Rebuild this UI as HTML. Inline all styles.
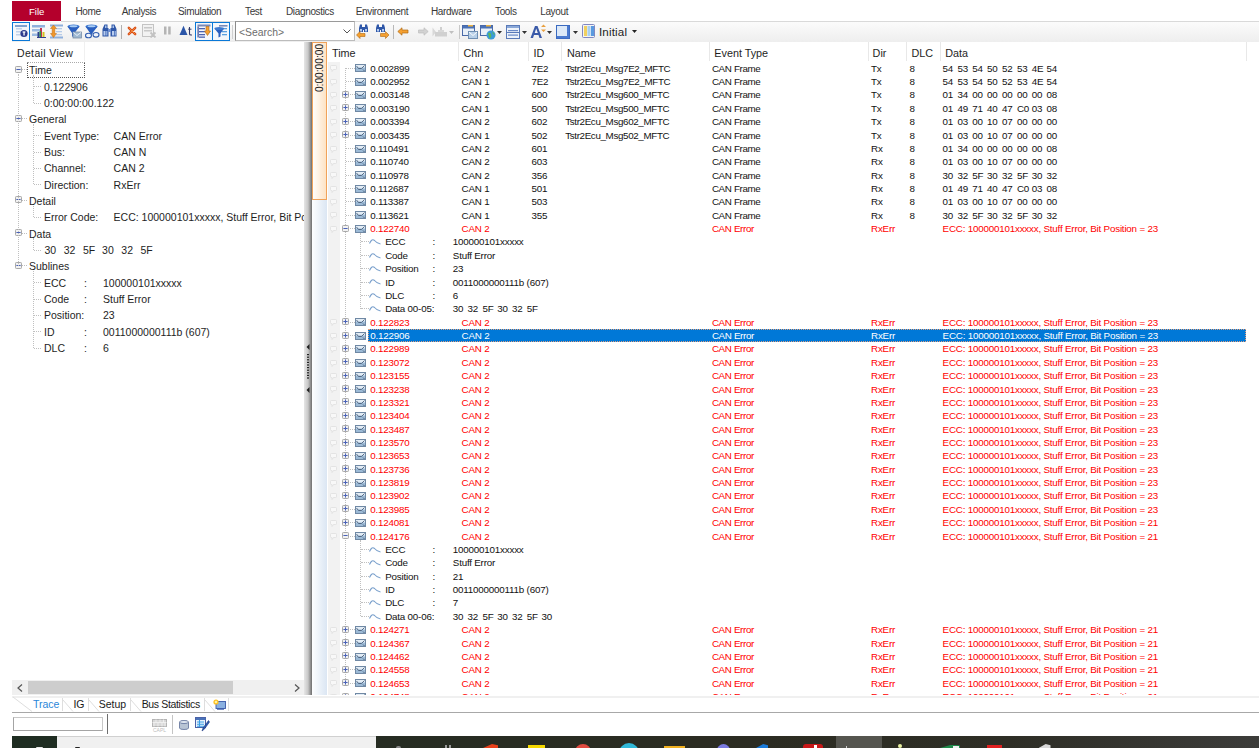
<!DOCTYPE html><html><head><meta charset="utf-8"><style>
html,body{margin:0;padding:0}
body{width:1259px;height:756px;position:relative;overflow:hidden;background:#fff;font-family:"Liberation Sans", sans-serif;color:#1a1a1a}
div,span,svg{position:absolute;box-sizing:border-box}
.t{white-space:pre;line-height:1}
.ic{display:block}
.m{font-size:10px;color:#383838;top:7px;letter-spacing:-0.35px}
.lt{font-size:10.5px;color:#1e1e1e}
.g{font-size:9.8px;color:#111;letter-spacing:-0.2px}
.r{color:#ff0000}
.dotv{border-left:1px dotted #c0c0c0;width:1px}
.doth{border-top:1px dotted #c0c0c0;height:1px}
</style></head><body>

<div style="left:12px;top:1px;width:49px;height:20px;background:#b4002c"></div>
<span class="t" style="left:29px;top:7px;font-size:9.6px;color:#fff">File</span>
<span class="t m" style="left:75.5px">Home</span>
<span class="t m" style="left:121.8px">Analysis</span>
<span class="t m" style="left:178px">Simulation</span>
<span class="t m" style="left:245px">Test</span>
<span class="t m" style="left:286px">Diagnostics</span>
<span class="t m" style="left:355.8px">Environment</span>
<span class="t m" style="left:431px">Hardware</span>
<span class="t m" style="left:495px">Tools</span>
<span class="t m" style="left:540.2px">Layout</span>
<div style="left:61px;top:21px;width:1198px;height:1px;background:#d9d9d9"></div>
<div style="left:12px;top:22px;width:1247px;height:20px;background:linear-gradient(#fbfbfb,#eeeeee)"></div>
<div style="left:12px;top:22px;width:18px;height:19px;border:1px solid #0a78d7;background:#f4f7fb"></div>
<div style="left:195px;top:22px;width:18px;height:19px;border:1px solid #0a78d7;background:#f4f7fb"></div>
<div style="left:212px;top:22px;width:18px;height:19px;border:1px solid #0a78d7;background:#f4f7fb"></div>
<div style="left:235px;top:21px;width:120px;height:20px;background:#fff;border:1px solid #bcbcbc;border-left-color:#8a8a8a;border-top-color:#9a9a9a"></div>
<span class="t" style="left:239px;top:27.5px;font-size:10.4px;color:#6d6d6d">&lt;Search&gt;</span>
<svg style="left:343px;top:29px" width="8" height="5" viewBox="0 0 8 5"><path d="M0.5 0.5 L4 4 L7.5 0.5" stroke="#555" fill="none"/></svg>
<span class="t" style="left:599px;top:26px;font-size:11.6px;color:#222;letter-spacing:0.15px">Initial</span>
<svg style="left:14px;top:24px" width="15" height="15" viewBox="0 0 15 15"><rect x="1" y="1" width="12" height="2" fill="#7fa2d0"/><rect x="2" y="4" width="6" height="1.5" fill="#c0d2ea"/><rect x="2" y="7" width="6" height="1.5" fill="#c0d2ea"/><rect x="2" y="10" width="6" height="1.5" fill="#c0d2ea"/><circle cx="10" cy="9.5" r="3.6" fill="#2c3a8c"/><rect x="9.4" y="8" width="1.3" height="3.5" fill="#fff"/><rect x="8.6" y="7.4" width="2.8" height="1.2" fill="#fff"/></svg>
<svg style="left:32px;top:24px" width="15" height="15" viewBox="0 0 15 15"><rect x="0" y="1" width="13" height="2.5" fill="#8fb0dc"/><rect x="0" y="5" width="9" height="2.5" fill="#9dbbe2"/><rect x="0" y="9.5" width="9" height="2.5" fill="#9dbbe2"/><rect x="5.5" y="8" width="2" height="6" fill="#2e3f8c"/><rect x="8" y="4" width="2" height="10" fill="#c0304a"/><rect x="7.5" y="7" width="1.5" height="7" fill="#2a9a4a"/><rect x="10.5" y="8" width="2" height="6" fill="#d6c21e"/><rect x="5" y="13" width="9" height="1" fill="#2e3f8c"/></svg>
<svg style="left:50px;top:24px" width="14" height="15" viewBox="0 0 14 15"><rect x="0" y="0.5" width="13" height="2" fill="#8fb0dc"/><rect x="6" y="4" width="6" height="1.3" fill="#b5cbe8"/><rect x="6" y="7" width="6" height="1.3" fill="#b5cbe8"/><rect x="6" y="10" width="6" height="1.3" fill="#b5cbe8"/><rect x="0" y="12.5" width="13" height="2" fill="#8fb0dc"/><path d="M3.5 1 L6.5 4.5 H4.8 V9.5 H6.5 L3.5 13.5 L0.5 9.5 H2.2 V4.5 H0.5 Z" fill="#f0962a" stroke="#b86a14" stroke-width="0.5"/></svg>
<svg style="left:67px;top:24px" width="15" height="15" viewBox="0 0 15 15"><ellipse cx="6.5" cy="2.5" rx="6" ry="2" fill="#3d78d0"/><path d="M0.5 2.5 L5 9 V13 L7.5 11 V9 L12.5 2.5 Z" fill="#2a5fbf"/><ellipse cx="6.5" cy="2.3" rx="4" ry="1" fill="#a8cdf5"/><rect x="6" y="8" width="8.5" height="6" fill="#9fb9d2" stroke="#7a8ea6" stroke-width="0.8"/><path d="M6.5 8.5 L10 11.5 L14 8.5" stroke="#eef4fa" fill="none" stroke-width="0.9"/></svg>
<svg style="left:85px;top:24px" width="15" height="15" viewBox="0 0 15 15"><ellipse cx="6.5" cy="2.5" rx="6" ry="2" fill="#3d78d0"/><path d="M0.5 2.5 L5 9 V12 L7.5 10 V9 L12.5 2.5 Z" fill="#2a5fbf"/><ellipse cx="6.5" cy="2.3" rx="4" ry="1" fill="#a8cdf5"/><ellipse cx="3.5" cy="11.5" rx="3" ry="2.3" fill="#eef3fb" stroke="#3560b0" stroke-width="1.1"/><ellipse cx="11" cy="10.8" rx="3" ry="2.3" fill="#eef3fb" stroke="#3560b0" stroke-width="1.1"/></svg>
<svg style="left:102px;top:24px" width="15" height="14" viewBox="0 0 15 14"><path d="M2.5 0.5 H5.5 V4 H6.5 V12.5 H0.5 V5 Z" fill="#2f57a8"/><path d="M9.5 0.5 H12.5 L14.5 5 V12.5 H8.5 V4 H9.5 Z" fill="#2f57a8"/><rect x="6" y="5" width="3" height="3" fill="#6f8fcf"/><rect x="1.5" y="7" width="2" height="4.5" fill="#b9cdef"/><rect x="4" y="7" width="1.5" height="4.5" fill="#8aa8dc"/><rect x="10" y="7" width="2" height="4.5" fill="#b9cdef"/><rect x="12.5" y="7" width="1.5" height="4.5" fill="#8aa8dc"/><rect x="3" y="1.5" width="1.5" height="2.5" fill="#a9c3ea"/><rect x="10.5" y="1.5" width="1.5" height="2.5" fill="#a9c3ea"/></svg>
<div style="left:121px;top:25px;width:1px;height:14px;background:#b0b0b0"></div>
<svg style="left:127px;top:26px" width="10" height="10" viewBox="0 0 10 10"><path d="M1.8 1.8 L8.2 8.2 M8.2 1.8 L1.8 8.2" stroke="#d8501a" stroke-width="2.4" stroke-linecap="round"/><path d="M2 2 L8 8 M8 2 L2 8" stroke="#f58a3a" stroke-width="0.9" stroke-linecap="round"/></svg>
<svg style="left:142px;top:24px" width="15" height="14" viewBox="0 0 15 14"><rect x="0.5" y="0.5" width="11" height="12" fill="#f2f2f2" stroke="#c4c4c4"/><rect x="2" y="3" width="8" height="1.5" fill="#c8c8c8"/><rect x="2" y="6" width="8" height="1.5" fill="#c8c8c8"/><path d="M8.5 8.5 L13.5 13.5 M13.5 8.5 L8.5 13.5" stroke="#c2c2c2" stroke-width="1.8"/></svg>
<svg style="left:164px;top:26px" width="7" height="9" viewBox="0 0 7 9"><rect x="0" y="0.5" width="2.5" height="8" fill="#b4b4b4"/><rect x="4.2" y="0.5" width="2.5" height="8" fill="#b4b4b4"/></svg>
<svg style="left:179px;top:25px" width="14" height="11" viewBox="0 0 14 11"><path d="M0.5 10 L4.5 0.8 L8.5 10 Z" fill="#2a55a8"/><path d="M10.5 2 V9 Q10.5 10 12 10 H13" stroke="#333a6a" stroke-width="1.1" fill="none"/><path d="M9.2 4.2 H12.5" stroke="#333a6a" stroke-width="1"/></svg>
<svg style="left:197px;top:24px" width="14" height="15" viewBox="0 0 14 15"><rect x="0.5" y="0.5" width="13" height="2" fill="#7a8ab8"/><rect x="0.5" y="2.5" width="1.2" height="11" fill="#3a4a90"/><rect x="2" y="4" width="6" height="1.3" fill="#4a62b0"/><rect x="2" y="7" width="6" height="1.3" fill="#4a62b0"/><rect x="2" y="10" width="6" height="1.3" fill="#4a62b0"/><rect x="2" y="12.5" width="6" height="1.3" fill="#4a62b0"/><path d="M9 2.5 H12 V7 H13.5 L10.5 11.5 L7.5 7 H9 Z" fill="#f5a030" stroke="#a86a20" stroke-width="0.6"/></svg>
<svg style="left:214px;top:24px" width="14" height="15" viewBox="0 0 14 15"><rect x="5" y="1" width="8.5" height="1.6" fill="#7a8ab8"/><rect x="8" y="4" width="5" height="1.3" fill="#5aa0e0"/><rect x="8" y="7" width="5" height="1.3" fill="#5aa0e0"/><rect x="8" y="10" width="5" height="1.3" fill="#5aa0e0"/><path d="M0.5 4.5 L4.5 9.5 V13.5 L6.5 12.5 V9.5 L10 4.5 Z" fill="#2a5fbf"/><ellipse cx="5.2" cy="4.5" rx="4.7" ry="1.5" fill="#3d78d0"/></svg>
<div style="left:232px;top:25px;width:1px;height:14px;background:#d0d0d0"></div>
<svg style="left:356px;top:24px" width="15" height="16" viewBox="0 0 15 16"><path d="M4 0.5 H6 V3 H7 V8 H3 V4 Z" fill="#2f57a8"/><path d="M9 0.5 H11 L12 4 V8 H8 V3 H9 Z" fill="#2f57a8"/><rect x="6.5" y="3" width="2" height="3" fill="#2f57a8"/><rect x="4" y="5" width="2" height="2.5" fill="#b0c8ee"/><rect x="9" y="5" width="2" height="2.5" fill="#b0c8ee"/><path d="M0.5 11 L4 7.5 V9.5 H9 V12.5 H4 V14.5 Z" fill="#f5a030" stroke="#b06a14" stroke-width="0.6"/></svg>
<svg style="left:374px;top:24px" width="16" height="16" viewBox="0 0 16 16"><g transform="translate(-1,0)"><path d="M4 0.5 H6 V3 H7 V8 H3 V4 Z" fill="#2f57a8"/><path d="M9 0.5 H11 L12 4 V8 H8 V3 H9 Z" fill="#2f57a8"/><rect x="6.5" y="3" width="2" height="3" fill="#2f57a8"/><rect x="4" y="5" width="2" height="2.5" fill="#b0c8ee"/><rect x="9" y="5" width="2" height="2.5" fill="#b0c8ee"/></g><path d="M15 11 L11.5 7.5 V9.5 H6.5 V12.5 H11.5 V14.5 Z" fill="#f5a030" stroke="#b06a14" stroke-width="0.6"/></svg>
<div style="left:393px;top:25px;width:1px;height:14px;background:#b8b8b8"></div>
<svg style="left:397px;top:27px" width="12" height="9" viewBox="0 0 12 9"><path d="M0.8 4.5 L5 0.8 V3 H11 V6 H5 V8.2 Z" fill="#f5a030" stroke="#b06a14" stroke-width="0.7"/></svg>
<svg style="left:418px;top:27px" width="11" height="9" viewBox="0 0 11 9"><path d="M10.2 4.5 L6 0.8 V3 H0.5 V6 H6 V8.2 Z" fill="#d2d2d2" stroke="#bdbdbd" stroke-width="0.7"/></svg>
<svg style="left:432px;top:26px" width="16" height="12" viewBox="0 0 16 12"><path d="M0.5 1.5 L4 6 L0.5 10.5 Z" fill="#d8d8d8"/><rect x="3" y="6" width="12" height="4.5" fill="#d0d0d0"/><rect x="8" y="1" width="2" height="5" fill="#cfcfcf"/><rect x="6" y="4" width="6" height="2" fill="#d8d8d8"/></svg>
<svg style="left:449px;top:31px" width="5" height="3" viewBox="0 0 5 3"><path d="M0 0 H5 L2.5 3 Z" fill="#c0c0c0"/></svg>
<div style="left:459px;top:25px;width:1px;height:14px;background:#c8c8c8"></div>
<svg style="left:462px;top:25px" width="16" height="14" viewBox="0 0 16 14"><rect x="0.5" y="0.5" width="12" height="10" fill="#e9f0f8" stroke="#4a6aa8"/><rect x="1" y="1" width="11" height="2.5" fill="#4a72b8"/><rect x="6" y="0" width="5" height="1.5" fill="#e8b040"/><rect x="6.5" y="6.5" width="9" height="7" fill="#b8d0e8" stroke="#6f8fb3"/><path d="M7 7 L11 10.5 L15 7" stroke="#fff" fill="none" stroke-width="0.9"/></svg>
<svg style="left:480px;top:25px" width="16" height="15" viewBox="0 0 16 15"><rect x="0.5" y="0.5" width="12" height="10" fill="#e9f0f8" stroke="#4a6aa8"/><rect x="1" y="1" width="11" height="2.5" fill="#4a72b8"/><rect x="6" y="0" width="5" height="1.5" fill="#e8b040"/><circle cx="11" cy="10" r="4.5" fill="#3a9ad8"/><path d="M8 8 Q10 7 11 9 Q12 12 9.5 13.5 Z" fill="#5cb85c"/><path d="M12 6 Q14 8 15 10 L13 9 Z" fill="#5cb85c"/></svg>
<svg style="left:497px;top:31px" width="5" height="3" viewBox="0 0 5 3"><path d="M0 0 H5 L2.5 3 Z" fill="#333"/></svg>
<svg style="left:506px;top:25px" width="14" height="14" viewBox="0 0 14 14"><rect x="0.5" y="0.5" width="13" height="13" fill="#eef3fa" stroke="#5a7ab8"/><rect x="1" y="1" width="12" height="2" fill="#8aa8d8"/><rect x="2" y="5" width="10" height="1.2" fill="#6a8ac8"/><rect x="1" y="7" width="12" height="1" fill="#5a7ab8"/><rect x="2" y="9.5" width="10" height="1.2" fill="#6a8ac8"/></svg>
<svg style="left:522px;top:31px" width="5" height="3" viewBox="0 0 5 3"><path d="M0 0 H5 L2.5 3 Z" fill="#333"/></svg>
<svg style="left:530px;top:24px" width="17" height="15" viewBox="0 0 17 15"><path d="M0.5 14 L5 2 H7.5 L12 14 H9.5 L8.5 11 H4 L3 14 Z M4.7 9 H7.8 L6.2 4.5 Z" fill="#3a5aa8" fill-rule="evenodd"/><path d="M13.5 0.5 L16 3 H11 Z M13.5 8 L16 5.5 H11 Z" fill="#e8a040"/></svg>
<svg style="left:547px;top:31px" width="5" height="3" viewBox="0 0 5 3"><path d="M0 0 H5 L2.5 3 Z" fill="#333"/></svg>
<svg style="left:556px;top:25px" width="14" height="14" viewBox="0 0 14 14"><rect x="0.5" y="0.5" width="13" height="13" fill="#dce9f8" stroke="#3a6ac0" stroke-width="1"/><rect x="1" y="11" width="12" height="2.2" fill="#4a7ad0"/><rect x="11" y="1" width="2.2" height="12" fill="#4a7ad0"/></svg>
<svg style="left:573px;top:31px" width="5" height="3" viewBox="0 0 5 3"><path d="M0 0 H5 L2.5 3 Z" fill="#333"/></svg>
<svg style="left:582px;top:24px" width="13" height="14" viewBox="0 0 13 14"><rect x="0.5" y="0.5" width="12" height="13" rx="1" fill="#f4f4f4" stroke="#8088c0"/><rect x="2" y="2" width="3" height="10" fill="#f0d060"/><rect x="5.5" y="2" width="3" height="10" fill="#a8d0f0"/><rect x="9" y="2" width="3" height="10" fill="#5a9ae0"/></svg>
<svg style="left:632px;top:30px" width="5" height="3" viewBox="0 0 5 3"><path d="M0 0 H5 L2.5 3 Z" fill="#222"/></svg>
<div style="left:12px;top:42px;width:73px;height:19px;border-right:1px solid #f0f0f0"></div>
<span class="t lt" style="left:17px;top:47.5px;letter-spacing:0.35px">Detail View</span>
<div style="left:12px;top:61px;width:292px;height:619px;overflow:hidden">
<svg class="ic" style="left:3px;top:5px" width="7" height="7" viewBox="0 0 7 7"><rect x="0.5" y="0.5" width="6" height="6" rx="0.8" fill="#f2f2f2" stroke="#a8a8a8"/><path d="M1.4 3.5 H5.6" stroke="#4a62b8" stroke-width="1"/></svg>
<div class="doth" style="left:10px;top:8px;width:5px"></div>
<span class="t lt" style="left:17px;top:4.2px">Time</span>
<div class="doth" style="left:22px;top:25px;width:7px"></div>
<span class="t lt" style="left:32px;top:20.5px">0.122906</span>
<div class="doth" style="left:22px;top:42px;width:7px"></div>
<span class="t lt" style="left:32px;top:36.9px">0:00:00:00.122</span>
<svg class="ic" style="left:3px;top:54px" width="7" height="7" viewBox="0 0 7 7"><rect x="0.5" y="0.5" width="6" height="6" rx="0.8" fill="#f2f2f2" stroke="#a8a8a8"/><path d="M1.4 3.5 H5.6" stroke="#4a62b8" stroke-width="1"/></svg>
<div class="doth" style="left:10px;top:57px;width:5px"></div>
<span class="t lt" style="left:17px;top:53.2px">General</span>
<div class="doth" style="left:22px;top:74px;width:7px"></div>
<span class="t lt" style="left:32px;top:69.5px">Event Type:</span>
<span class="t lt" style="left:101.6px;top:69.5px">CAN Error</span>
<div class="doth" style="left:22px;top:91px;width:7px"></div>
<span class="t lt" style="left:32px;top:85.8px">Bus:</span>
<span class="t lt" style="left:101.6px;top:85.8px">CAN N</span>
<div class="doth" style="left:22px;top:107px;width:7px"></div>
<span class="t lt" style="left:32px;top:102.2px">Channel:</span>
<span class="t lt" style="left:101.6px;top:102.2px">CAN 2</span>
<div class="doth" style="left:22px;top:123px;width:7px"></div>
<span class="t lt" style="left:32px;top:118.5px">Direction:</span>
<span class="t lt" style="left:101.6px;top:118.5px">RxErr</span>
<svg class="ic" style="left:3px;top:135px" width="7" height="7" viewBox="0 0 7 7"><rect x="0.5" y="0.5" width="6" height="6" rx="0.8" fill="#f2f2f2" stroke="#a8a8a8"/><path d="M1.4 3.5 H5.6" stroke="#4a62b8" stroke-width="1"/></svg>
<div class="doth" style="left:10px;top:139px;width:5px"></div>
<span class="t lt" style="left:17px;top:134.8px">Detail</span>
<div class="doth" style="left:22px;top:156px;width:7px"></div>
<span class="t lt" style="left:32px;top:151.2px">Error Code:</span>
<span class="t lt" style="left:101.6px;top:151.2px">ECC: 100000101xxxxx, Stuff Error, Bit Position = 23</span>
<svg class="ic" style="left:3px;top:168px" width="7" height="7" viewBox="0 0 7 7"><rect x="0.5" y="0.5" width="6" height="6" rx="0.8" fill="#f2f2f2" stroke="#a8a8a8"/><path d="M1.4 3.5 H5.6" stroke="#4a62b8" stroke-width="1"/></svg>
<div class="doth" style="left:10px;top:172px;width:5px"></div>
<span class="t lt" style="left:17px;top:167.5px">Data</span>
<div class="doth" style="left:22px;top:189px;width:7px"></div>
<span class="t lt" style="left:32.5px;top:183.8px">30</span>
<span class="t lt" style="left:51.7px;top:183.8px">32</span>
<span class="t lt" style="left:70.9px;top:183.8px">5F</span>
<span class="t lt" style="left:90.1px;top:183.8px">30</span>
<span class="t lt" style="left:109.3px;top:183.8px">32</span>
<span class="t lt" style="left:128.5px;top:183.8px">5F</span>
<svg class="ic" style="left:3px;top:201px" width="7" height="7" viewBox="0 0 7 7"><rect x="0.5" y="0.5" width="6" height="6" rx="0.8" fill="#f2f2f2" stroke="#a8a8a8"/><path d="M1.4 3.5 H5.6" stroke="#4a62b8" stroke-width="1"/></svg>
<div class="doth" style="left:10px;top:204px;width:5px"></div>
<span class="t lt" style="left:17px;top:200.2px">Sublines</span>
<div class="doth" style="left:22px;top:221px;width:7px"></div>
<span class="t lt" style="left:32px;top:216.5px">ECC</span>
<span class="t lt" style="left:72px;top:216.5px">:</span>
<span class="t lt" style="left:91px;top:216.5px">100000101xxxxx</span>
<div class="doth" style="left:22px;top:238px;width:7px"></div>
<span class="t lt" style="left:32px;top:232.8px">Code</span>
<span class="t lt" style="left:72px;top:232.8px">:</span>
<span class="t lt" style="left:91px;top:232.8px">Stuff Error</span>
<div class="doth" style="left:22px;top:254px;width:7px"></div>
<span class="t lt" style="left:32px;top:249.1px">Position:</span>
<span class="t lt" style="left:91px;top:249.1px">23</span>
<div class="doth" style="left:22px;top:270px;width:7px"></div>
<span class="t lt" style="left:32px;top:265.5px">ID</span>
<span class="t lt" style="left:72px;top:265.5px">:</span>
<span class="t lt" style="left:91px;top:265.5px">0011000000111b (607)</span>
<div class="doth" style="left:22px;top:287px;width:7px"></div>
<span class="t lt" style="left:32px;top:281.8px">DLC</span>
<span class="t lt" style="left:72px;top:281.8px">:</span>
<span class="t lt" style="left:91px;top:281.8px">6</span>
<div class="dotv" style="left:6px;top:13px;height:192.0px"></div>
<div class="dotv" style="left:21px;top:14.0px;height:27.7px"></div>
<div class="dotv" style="left:21px;top:63.0px;height:60.3px"></div>
<div class="dotv" style="left:21px;top:144.6px;height:11.3px"></div>
<div class="dotv" style="left:21px;top:177.3px;height:11.3px"></div>
<div class="dotv" style="left:21px;top:210.0px;height:76.6px"></div>
</div>
<div style="left:27px;top:62px;width:58px;height:16px;border:1px dotted #555;border-top-color:#aaa"></div>
<div style="left:12px;top:680px;width:292px;height:15px;background:#f0f0f0"></div>
<div style="left:28px;top:681px;width:205px;height:13px;background:#cdcdcd"></div>
<svg style="left:17px;top:684px" width="6" height="8" viewBox="0 0 6 8"><path d="M5 0.5 L1 4 L5 7.5" stroke="#555" stroke-width="1.2" fill="none"/></svg>
<svg style="left:294px;top:684px" width="6" height="8" viewBox="0 0 6 8"><path d="M1 0.5 L5 4 L1 7.5" stroke="#555" stroke-width="1.2" fill="none"/></svg>
<div style="left:304px;top:42px;width:8px;height:653px;background:linear-gradient(to right,#e6e6e6,#c8c8c8 50%,#6e6e6e)"></div>
<svg style="left:305px;top:343px" width="6" height="50" viewBox="0 0 6 50"><path d="M4.5 1 L1.5 4 L4.5 7 Z" fill="#222"/><rect x="2" y="11.0" width="2" height="1.2" fill="#222"/><rect x="2" y="13.6" width="2" height="1.2" fill="#222"/><rect x="2" y="16.2" width="2" height="1.2" fill="#222"/><rect x="2" y="18.8" width="2" height="1.2" fill="#222"/><rect x="2" y="21.4" width="2" height="1.2" fill="#222"/><rect x="2" y="24.0" width="2" height="1.2" fill="#222"/><rect x="2" y="26.6" width="2" height="1.2" fill="#222"/><rect x="2" y="29.2" width="2" height="1.2" fill="#222"/><rect x="2" y="31.8" width="2" height="1.2" fill="#222"/><rect x="2" y="34.4" width="2" height="1.2" fill="#222"/><path d="M4.5 44 L1.5 47 L4.5 50 Z" fill="#222"/></svg>
<div style="left:312px;top:42px;width:15px;height:653px;background:linear-gradient(to right,#fdfeff,#dbe6f3)"></div>
<div style="left:312px;top:42px;width:15px;height:158px;border:1px solid #f0a35a;background:linear-gradient(to right,#fffdfa,#fde3c5)"></div>
<span class="t" style="left:319.5px;top:68px;font-size:10.2px;color:#222;transform:translate(-50%,-50%) rotate(-90deg);">0:00:00:00</span>
<div style="left:328px;top:62px;width:11.5px;height:633px;background:#f2f2f2"></div>
<span class="t" style="left:332px;top:47.8px;font-size:10.8px;color:#1e1e1e">Time</span>
<span class="t" style="left:463.5px;top:47.8px;font-size:10.8px;color:#1e1e1e">Chn</span>
<span class="t" style="left:533.4px;top:47.8px;font-size:10.8px;color:#1e1e1e">ID</span>
<span class="t" style="left:567px;top:47.8px;font-size:10.8px;color:#1e1e1e">Name</span>
<span class="t" style="left:714.3px;top:47.8px;font-size:10.8px;color:#1e1e1e">Event Type</span>
<span class="t" style="left:872.6px;top:47.8px;font-size:10.8px;color:#1e1e1e">Dir</span>
<span class="t" style="left:911.4px;top:47.8px;font-size:10.8px;color:#1e1e1e">DLC</span>
<span class="t" style="left:945.2px;top:47.8px;font-size:10.8px;color:#1e1e1e">Data</span>
<div style="left:458px;top:42px;width:1px;height:19px;background:#e8e8e8"></div>
<div style="left:528px;top:42px;width:1px;height:19px;background:#e8e8e8"></div>
<div style="left:561px;top:42px;width:1px;height:19px;background:#e8e8e8"></div>
<div style="left:709px;top:42px;width:1px;height:19px;background:#e8e8e8"></div>
<div style="left:868px;top:42px;width:1px;height:19px;background:#e8e8e8"></div>
<div style="left:906px;top:42px;width:1px;height:19px;background:#e8e8e8"></div>
<div style="left:940px;top:42px;width:1px;height:19px;background:#e8e8e8"></div>
<div style="left:1246px;top:42px;width:1px;height:19px;background:#e8e8e8"></div>
<div style="left:312px;top:61px;width:947px;height:634px;overflow:hidden">
<div class="dotv" style="left:33px;top:7.4px;height:615.0px"></div>
<div class="dotv" style="left:48px;top:171.8px;height:76.2px"></div>
<div class="dotv" style="left:48px;top:479.3px;height:76.2px"></div>
<svg class="ic" style="left:18px;top:4px" width="7" height="7" viewBox="0 0 7 7"><path d="M0.5 1.5 Q0.5 0.5 1.5 0.5 H5.5 Q6.5 0.5 6.5 1.5 V3.5 Q6.5 4.5 5.5 4.5 H3.5 L2 6.5 V4.5 H1.5 Q0.5 4.5 0.5 3.5 Z" fill="#f8f8f8" stroke="#dedede" stroke-width="0.8"/></svg>
<div class="doth" style="left:34px;top:7px;width:9px"></div>
<svg class="ic" style="left:43px;top:3px" width="11" height="8" viewBox="0 0 11 8"><rect x="0.5" y="0.5" width="10" height="7" fill="#9cbad6" stroke="#6f88a4"/><rect x="1" y="1" width="9" height="2.5" fill="#e2ecf5"/><path d="M1.5 2 L3.5 4.5 L6.5 4.5 L9.5 1.5 M8 5.5 L9.5 7" stroke="#4a5e78" stroke-width="0.9" fill="none"/></svg>
<span class="t g" style="left:58.30000000000001px;top:2.6px">0.002899</span>
<span class="t g" style="left:149.60000000000002px;top:2.6px">CAN 2</span>
<span class="t g" style="left:219.5px;top:2.6px">7E2</span>
<span class="t g" style="left:253.20000000000005px;top:2.6px;letter-spacing:-0.35px">Tstr2Ecu_Msg7E2_MFTC</span>
<span class="t g" style="left:399.9px;top:2.6px;letter-spacing:-0.35px">CAN Frame</span>
<span class="t g" style="left:559px;top:2.6px">Tx</span>
<span class="t g" style="left:597.5px;top:2.6px">8</span>
<span class="t g" style="left:630.6px;top:2.6px">54</span><span class="t g" style="left:645.5px;top:2.6px">53</span><span class="t g" style="left:660.3px;top:2.6px">54</span><span class="t g" style="left:675.1px;top:2.6px">50</span><span class="t g" style="left:690.0px;top:2.6px">52</span><span class="t g" style="left:704.9px;top:2.6px">53</span><span class="t g" style="left:719.7px;top:2.6px">4E</span><span class="t g" style="left:734.5px;top:2.6px">54</span>
<svg class="ic" style="left:18px;top:18px" width="7" height="7" viewBox="0 0 7 7"><path d="M0.5 1.5 Q0.5 0.5 1.5 0.5 H5.5 Q6.5 0.5 6.5 1.5 V3.5 Q6.5 4.5 5.5 4.5 H3.5 L2 6.5 V4.5 H1.5 Q0.5 4.5 0.5 3.5 Z" fill="#f8f8f8" stroke="#dedede" stroke-width="0.8"/></svg>
<div class="doth" style="left:34px;top:20px;width:9px"></div>
<svg class="ic" style="left:43px;top:17px" width="11" height="8" viewBox="0 0 11 8"><rect x="0.5" y="0.5" width="10" height="7" fill="#9cbad6" stroke="#6f88a4"/><rect x="1" y="1" width="9" height="2.5" fill="#e2ecf5"/><path d="M1.5 2 L3.5 4.5 L6.5 4.5 L9.5 1.5 M8 5.5 L9.5 7" stroke="#4a5e78" stroke-width="0.9" fill="none"/></svg>
<span class="t g" style="left:58.30000000000001px;top:16.0px">0.002952</span>
<span class="t g" style="left:149.60000000000002px;top:16.0px">CAN 1</span>
<span class="t g" style="left:219.5px;top:16.0px">7E2</span>
<span class="t g" style="left:253.20000000000005px;top:16.0px;letter-spacing:-0.35px">Tstr2Ecu_Msg7E2_MFTC</span>
<span class="t g" style="left:399.9px;top:16.0px;letter-spacing:-0.35px">CAN Frame</span>
<span class="t g" style="left:559px;top:16.0px">Tx</span>
<span class="t g" style="left:597.5px;top:16.0px">8</span>
<span class="t g" style="left:630.6px;top:16.0px">54</span><span class="t g" style="left:645.5px;top:16.0px">53</span><span class="t g" style="left:660.3px;top:16.0px">54</span><span class="t g" style="left:675.1px;top:16.0px">50</span><span class="t g" style="left:690.0px;top:16.0px">52</span><span class="t g" style="left:704.9px;top:16.0px">53</span><span class="t g" style="left:719.7px;top:16.0px">4E</span><span class="t g" style="left:734.5px;top:16.0px">54</span>
<svg class="ic" style="left:18px;top:31px" width="7" height="7" viewBox="0 0 7 7"><path d="M0.5 1.5 Q0.5 0.5 1.5 0.5 H5.5 Q6.5 0.5 6.5 1.5 V3.5 Q6.5 4.5 5.5 4.5 H3.5 L2 6.5 V4.5 H1.5 Q0.5 4.5 0.5 3.5 Z" fill="#f8f8f8" stroke="#dedede" stroke-width="0.8"/></svg>
<svg class="ic" style="left:30px;top:30px" width="7" height="7" viewBox="0 0 7 7"><rect x="0.5" y="0.5" width="6" height="6" rx="0.8" fill="#f2f2f2" stroke="#a8a8a8"/><path d="M1.4 3.5 H5.6" stroke="#4a62b8" stroke-width="1"/><path d="M3.5 1.4 V5.6" stroke="#4a62b8" stroke-width="1"/></svg>
<div class="doth" style="left:38px;top:33px;width:5px"></div>
<svg class="ic" style="left:43px;top:30px" width="11" height="8" viewBox="0 0 11 8"><rect x="0.5" y="0.5" width="10" height="7" fill="#9cbad6" stroke="#6f88a4"/><rect x="1" y="1" width="9" height="2.5" fill="#e2ecf5"/><path d="M1.5 2 L3.5 4.5 L6.5 4.5 L9.5 1.5 M8 5.5 L9.5 7" stroke="#4a5e78" stroke-width="0.9" fill="none"/></svg>
<span class="t g" style="left:58.30000000000001px;top:29.3px">0.003148</span>
<span class="t g" style="left:149.60000000000002px;top:29.3px">CAN 2</span>
<span class="t g" style="left:219.5px;top:29.3px">600</span>
<span class="t g" style="left:253.20000000000005px;top:29.3px;letter-spacing:-0.35px">Tstr2Ecu_Msg600_MFTC</span>
<span class="t g" style="left:399.9px;top:29.3px;letter-spacing:-0.35px">CAN Frame</span>
<span class="t g" style="left:559px;top:29.3px">Tx</span>
<span class="t g" style="left:597.5px;top:29.3px">8</span>
<span class="t g" style="left:630.6px;top:29.3px">01</span><span class="t g" style="left:645.5px;top:29.3px">34</span><span class="t g" style="left:660.3px;top:29.3px">00</span><span class="t g" style="left:675.1px;top:29.3px">00</span><span class="t g" style="left:690.0px;top:29.3px">00</span><span class="t g" style="left:704.9px;top:29.3px">00</span><span class="t g" style="left:719.7px;top:29.3px">00</span><span class="t g" style="left:734.5px;top:29.3px">08</span>
<svg class="ic" style="left:18px;top:44px" width="7" height="7" viewBox="0 0 7 7"><path d="M0.5 1.5 Q0.5 0.5 1.5 0.5 H5.5 Q6.5 0.5 6.5 1.5 V3.5 Q6.5 4.5 5.5 4.5 H3.5 L2 6.5 V4.5 H1.5 Q0.5 4.5 0.5 3.5 Z" fill="#f8f8f8" stroke="#dedede" stroke-width="0.8"/></svg>
<svg class="ic" style="left:30px;top:43px" width="7" height="7" viewBox="0 0 7 7"><rect x="0.5" y="0.5" width="6" height="6" rx="0.8" fill="#f2f2f2" stroke="#a8a8a8"/><path d="M1.4 3.5 H5.6" stroke="#4a62b8" stroke-width="1"/><path d="M3.5 1.4 V5.6" stroke="#4a62b8" stroke-width="1"/></svg>
<div class="doth" style="left:38px;top:47px;width:5px"></div>
<svg class="ic" style="left:43px;top:43px" width="11" height="8" viewBox="0 0 11 8"><rect x="0.5" y="0.5" width="10" height="7" fill="#9cbad6" stroke="#6f88a4"/><rect x="1" y="1" width="9" height="2.5" fill="#e2ecf5"/><path d="M1.5 2 L3.5 4.5 L6.5 4.5 L9.5 1.5 M8 5.5 L9.5 7" stroke="#4a5e78" stroke-width="0.9" fill="none"/></svg>
<span class="t g" style="left:58.30000000000001px;top:42.7px">0.003190</span>
<span class="t g" style="left:149.60000000000002px;top:42.7px">CAN 1</span>
<span class="t g" style="left:219.5px;top:42.7px">500</span>
<span class="t g" style="left:253.20000000000005px;top:42.7px;letter-spacing:-0.35px">Tstr2Ecu_Msg500_MFTC</span>
<span class="t g" style="left:399.9px;top:42.7px;letter-spacing:-0.35px">CAN Frame</span>
<span class="t g" style="left:559px;top:42.7px">Tx</span>
<span class="t g" style="left:597.5px;top:42.7px">8</span>
<span class="t g" style="left:630.6px;top:42.7px">01</span><span class="t g" style="left:645.5px;top:42.7px">49</span><span class="t g" style="left:660.3px;top:42.7px">71</span><span class="t g" style="left:675.1px;top:42.7px">40</span><span class="t g" style="left:690.0px;top:42.7px">47</span><span class="t g" style="left:704.9px;top:42.7px">C0</span><span class="t g" style="left:719.7px;top:42.7px">03</span><span class="t g" style="left:734.5px;top:42.7px">08</span>
<svg class="ic" style="left:18px;top:58px" width="7" height="7" viewBox="0 0 7 7"><path d="M0.5 1.5 Q0.5 0.5 1.5 0.5 H5.5 Q6.5 0.5 6.5 1.5 V3.5 Q6.5 4.5 5.5 4.5 H3.5 L2 6.5 V4.5 H1.5 Q0.5 4.5 0.5 3.5 Z" fill="#f8f8f8" stroke="#dedede" stroke-width="0.8"/></svg>
<svg class="ic" style="left:30px;top:57px" width="7" height="7" viewBox="0 0 7 7"><rect x="0.5" y="0.5" width="6" height="6" rx="0.8" fill="#f2f2f2" stroke="#a8a8a8"/><path d="M1.4 3.5 H5.6" stroke="#4a62b8" stroke-width="1"/><path d="M3.5 1.4 V5.6" stroke="#4a62b8" stroke-width="1"/></svg>
<div class="doth" style="left:38px;top:60px;width:5px"></div>
<svg class="ic" style="left:43px;top:57px" width="11" height="8" viewBox="0 0 11 8"><rect x="0.5" y="0.5" width="10" height="7" fill="#9cbad6" stroke="#6f88a4"/><rect x="1" y="1" width="9" height="2.5" fill="#e2ecf5"/><path d="M1.5 2 L3.5 4.5 L6.5 4.5 L9.5 1.5 M8 5.5 L9.5 7" stroke="#4a5e78" stroke-width="0.9" fill="none"/></svg>
<span class="t g" style="left:58.30000000000001px;top:56.1px">0.003394</span>
<span class="t g" style="left:149.60000000000002px;top:56.1px">CAN 2</span>
<span class="t g" style="left:219.5px;top:56.1px">602</span>
<span class="t g" style="left:253.20000000000005px;top:56.1px;letter-spacing:-0.35px">Tstr2Ecu_Msg602_MFTC</span>
<span class="t g" style="left:399.9px;top:56.1px;letter-spacing:-0.35px">CAN Frame</span>
<span class="t g" style="left:559px;top:56.1px">Tx</span>
<span class="t g" style="left:597.5px;top:56.1px">8</span>
<span class="t g" style="left:630.6px;top:56.1px">01</span><span class="t g" style="left:645.5px;top:56.1px">03</span><span class="t g" style="left:660.3px;top:56.1px">00</span><span class="t g" style="left:675.1px;top:56.1px">10</span><span class="t g" style="left:690.0px;top:56.1px">07</span><span class="t g" style="left:704.9px;top:56.1px">00</span><span class="t g" style="left:719.7px;top:56.1px">00</span><span class="t g" style="left:734.5px;top:56.1px">00</span>
<svg class="ic" style="left:18px;top:71px" width="7" height="7" viewBox="0 0 7 7"><path d="M0.5 1.5 Q0.5 0.5 1.5 0.5 H5.5 Q6.5 0.5 6.5 1.5 V3.5 Q6.5 4.5 5.5 4.5 H3.5 L2 6.5 V4.5 H1.5 Q0.5 4.5 0.5 3.5 Z" fill="#f8f8f8" stroke="#dedede" stroke-width="0.8"/></svg>
<svg class="ic" style="left:30px;top:70px" width="7" height="7" viewBox="0 0 7 7"><rect x="0.5" y="0.5" width="6" height="6" rx="0.8" fill="#f2f2f2" stroke="#a8a8a8"/><path d="M1.4 3.5 H5.6" stroke="#4a62b8" stroke-width="1"/><path d="M3.5 1.4 V5.6" stroke="#4a62b8" stroke-width="1"/></svg>
<div class="doth" style="left:38px;top:74px;width:5px"></div>
<svg class="ic" style="left:43px;top:70px" width="11" height="8" viewBox="0 0 11 8"><rect x="0.5" y="0.5" width="10" height="7" fill="#9cbad6" stroke="#6f88a4"/><rect x="1" y="1" width="9" height="2.5" fill="#e2ecf5"/><path d="M1.5 2 L3.5 4.5 L6.5 4.5 L9.5 1.5 M8 5.5 L9.5 7" stroke="#4a5e78" stroke-width="0.9" fill="none"/></svg>
<span class="t g" style="left:58.30000000000001px;top:69.5px">0.003435</span>
<span class="t g" style="left:149.60000000000002px;top:69.5px">CAN 1</span>
<span class="t g" style="left:219.5px;top:69.5px">502</span>
<span class="t g" style="left:253.20000000000005px;top:69.5px;letter-spacing:-0.35px">Tstr2Ecu_Msg502_MFTC</span>
<span class="t g" style="left:399.9px;top:69.5px;letter-spacing:-0.35px">CAN Frame</span>
<span class="t g" style="left:559px;top:69.5px">Tx</span>
<span class="t g" style="left:597.5px;top:69.5px">8</span>
<span class="t g" style="left:630.6px;top:69.5px">01</span><span class="t g" style="left:645.5px;top:69.5px">03</span><span class="t g" style="left:660.3px;top:69.5px">00</span><span class="t g" style="left:675.1px;top:69.5px">10</span><span class="t g" style="left:690.0px;top:69.5px">07</span><span class="t g" style="left:704.9px;top:69.5px">00</span><span class="t g" style="left:719.7px;top:69.5px">00</span><span class="t g" style="left:734.5px;top:69.5px">00</span>
<svg class="ic" style="left:18px;top:85px" width="7" height="7" viewBox="0 0 7 7"><path d="M0.5 1.5 Q0.5 0.5 1.5 0.5 H5.5 Q6.5 0.5 6.5 1.5 V3.5 Q6.5 4.5 5.5 4.5 H3.5 L2 6.5 V4.5 H1.5 Q0.5 4.5 0.5 3.5 Z" fill="#f8f8f8" stroke="#dedede" stroke-width="0.8"/></svg>
<div class="doth" style="left:34px;top:87px;width:9px"></div>
<svg class="ic" style="left:43px;top:84px" width="11" height="8" viewBox="0 0 11 8"><rect x="0.5" y="0.5" width="10" height="7" fill="#9cbad6" stroke="#6f88a4"/><rect x="1" y="1" width="9" height="2.5" fill="#e2ecf5"/><path d="M1.5 2 L3.5 4.5 L6.5 4.5 L9.5 1.5 M8 5.5 L9.5 7" stroke="#4a5e78" stroke-width="0.9" fill="none"/></svg>
<span class="t g" style="left:58.30000000000001px;top:82.8px">0.110491</span>
<span class="t g" style="left:149.60000000000002px;top:82.8px">CAN 2</span>
<span class="t g" style="left:219.5px;top:82.8px">601</span>
<span class="t g" style="left:399.9px;top:82.8px;letter-spacing:-0.35px">CAN Frame</span>
<span class="t g" style="left:559px;top:82.8px">Rx</span>
<span class="t g" style="left:597.5px;top:82.8px">8</span>
<span class="t g" style="left:630.6px;top:82.8px">01</span><span class="t g" style="left:645.5px;top:82.8px">34</span><span class="t g" style="left:660.3px;top:82.8px">00</span><span class="t g" style="left:675.1px;top:82.8px">00</span><span class="t g" style="left:690.0px;top:82.8px">00</span><span class="t g" style="left:704.9px;top:82.8px">00</span><span class="t g" style="left:719.7px;top:82.8px">00</span><span class="t g" style="left:734.5px;top:82.8px">08</span>
<svg class="ic" style="left:18px;top:98px" width="7" height="7" viewBox="0 0 7 7"><path d="M0.5 1.5 Q0.5 0.5 1.5 0.5 H5.5 Q6.5 0.5 6.5 1.5 V3.5 Q6.5 4.5 5.5 4.5 H3.5 L2 6.5 V4.5 H1.5 Q0.5 4.5 0.5 3.5 Z" fill="#f8f8f8" stroke="#dedede" stroke-width="0.8"/></svg>
<div class="doth" style="left:34px;top:100px;width:9px"></div>
<svg class="ic" style="left:43px;top:97px" width="11" height="8" viewBox="0 0 11 8"><rect x="0.5" y="0.5" width="10" height="7" fill="#9cbad6" stroke="#6f88a4"/><rect x="1" y="1" width="9" height="2.5" fill="#e2ecf5"/><path d="M1.5 2 L3.5 4.5 L6.5 4.5 L9.5 1.5 M8 5.5 L9.5 7" stroke="#4a5e78" stroke-width="0.9" fill="none"/></svg>
<span class="t g" style="left:58.30000000000001px;top:96.2px">0.110740</span>
<span class="t g" style="left:149.60000000000002px;top:96.2px">CAN 2</span>
<span class="t g" style="left:219.5px;top:96.2px">603</span>
<span class="t g" style="left:399.9px;top:96.2px;letter-spacing:-0.35px">CAN Frame</span>
<span class="t g" style="left:559px;top:96.2px">Rx</span>
<span class="t g" style="left:597.5px;top:96.2px">8</span>
<span class="t g" style="left:630.6px;top:96.2px">01</span><span class="t g" style="left:645.5px;top:96.2px">03</span><span class="t g" style="left:660.3px;top:96.2px">00</span><span class="t g" style="left:675.1px;top:96.2px">10</span><span class="t g" style="left:690.0px;top:96.2px">07</span><span class="t g" style="left:704.9px;top:96.2px">00</span><span class="t g" style="left:719.7px;top:96.2px">00</span><span class="t g" style="left:734.5px;top:96.2px">00</span>
<svg class="ic" style="left:18px;top:111px" width="7" height="7" viewBox="0 0 7 7"><path d="M0.5 1.5 Q0.5 0.5 1.5 0.5 H5.5 Q6.5 0.5 6.5 1.5 V3.5 Q6.5 4.5 5.5 4.5 H3.5 L2 6.5 V4.5 H1.5 Q0.5 4.5 0.5 3.5 Z" fill="#f8f8f8" stroke="#dedede" stroke-width="0.8"/></svg>
<div class="doth" style="left:34px;top:114px;width:9px"></div>
<svg class="ic" style="left:43px;top:110px" width="11" height="8" viewBox="0 0 11 8"><rect x="0.5" y="0.5" width="10" height="7" fill="#9cbad6" stroke="#6f88a4"/><rect x="1" y="1" width="9" height="2.5" fill="#e2ecf5"/><path d="M1.5 2 L3.5 4.5 L6.5 4.5 L9.5 1.5 M8 5.5 L9.5 7" stroke="#4a5e78" stroke-width="0.9" fill="none"/></svg>
<span class="t g" style="left:58.30000000000001px;top:109.6px">0.110978</span>
<span class="t g" style="left:149.60000000000002px;top:109.6px">CAN 2</span>
<span class="t g" style="left:219.5px;top:109.6px">356</span>
<span class="t g" style="left:399.9px;top:109.6px;letter-spacing:-0.35px">CAN Frame</span>
<span class="t g" style="left:559px;top:109.6px">Rx</span>
<span class="t g" style="left:597.5px;top:109.6px">8</span>
<span class="t g" style="left:630.6px;top:109.6px">30</span><span class="t g" style="left:645.5px;top:109.6px">32</span><span class="t g" style="left:660.3px;top:109.6px">5F</span><span class="t g" style="left:675.1px;top:109.6px">30</span><span class="t g" style="left:690.0px;top:109.6px">32</span><span class="t g" style="left:704.9px;top:109.6px">5F</span><span class="t g" style="left:719.7px;top:109.6px">30</span><span class="t g" style="left:734.5px;top:109.6px">32</span>
<svg class="ic" style="left:18px;top:125px" width="7" height="7" viewBox="0 0 7 7"><path d="M0.5 1.5 Q0.5 0.5 1.5 0.5 H5.5 Q6.5 0.5 6.5 1.5 V3.5 Q6.5 4.5 5.5 4.5 H3.5 L2 6.5 V4.5 H1.5 Q0.5 4.5 0.5 3.5 Z" fill="#f8f8f8" stroke="#dedede" stroke-width="0.8"/></svg>
<div class="doth" style="left:34px;top:127px;width:9px"></div>
<svg class="ic" style="left:43px;top:124px" width="11" height="8" viewBox="0 0 11 8"><rect x="0.5" y="0.5" width="10" height="7" fill="#9cbad6" stroke="#6f88a4"/><rect x="1" y="1" width="9" height="2.5" fill="#e2ecf5"/><path d="M1.5 2 L3.5 4.5 L6.5 4.5 L9.5 1.5 M8 5.5 L9.5 7" stroke="#4a5e78" stroke-width="0.9" fill="none"/></svg>
<span class="t g" style="left:58.30000000000001px;top:122.9px">0.112687</span>
<span class="t g" style="left:149.60000000000002px;top:122.9px">CAN 1</span>
<span class="t g" style="left:219.5px;top:122.9px">501</span>
<span class="t g" style="left:399.9px;top:122.9px;letter-spacing:-0.35px">CAN Frame</span>
<span class="t g" style="left:559px;top:122.9px">Rx</span>
<span class="t g" style="left:597.5px;top:122.9px">8</span>
<span class="t g" style="left:630.6px;top:122.9px">01</span><span class="t g" style="left:645.5px;top:122.9px">49</span><span class="t g" style="left:660.3px;top:122.9px">71</span><span class="t g" style="left:675.1px;top:122.9px">40</span><span class="t g" style="left:690.0px;top:122.9px">47</span><span class="t g" style="left:704.9px;top:122.9px">C0</span><span class="t g" style="left:719.7px;top:122.9px">03</span><span class="t g" style="left:734.5px;top:122.9px">08</span>
<svg class="ic" style="left:18px;top:138px" width="7" height="7" viewBox="0 0 7 7"><path d="M0.5 1.5 Q0.5 0.5 1.5 0.5 H5.5 Q6.5 0.5 6.5 1.5 V3.5 Q6.5 4.5 5.5 4.5 H3.5 L2 6.5 V4.5 H1.5 Q0.5 4.5 0.5 3.5 Z" fill="#f8f8f8" stroke="#dedede" stroke-width="0.8"/></svg>
<div class="doth" style="left:34px;top:140px;width:9px"></div>
<svg class="ic" style="left:43px;top:137px" width="11" height="8" viewBox="0 0 11 8"><rect x="0.5" y="0.5" width="10" height="7" fill="#9cbad6" stroke="#6f88a4"/><rect x="1" y="1" width="9" height="2.5" fill="#e2ecf5"/><path d="M1.5 2 L3.5 4.5 L6.5 4.5 L9.5 1.5 M8 5.5 L9.5 7" stroke="#4a5e78" stroke-width="0.9" fill="none"/></svg>
<span class="t g" style="left:58.30000000000001px;top:136.3px">0.113387</span>
<span class="t g" style="left:149.60000000000002px;top:136.3px">CAN 1</span>
<span class="t g" style="left:219.5px;top:136.3px">503</span>
<span class="t g" style="left:399.9px;top:136.3px;letter-spacing:-0.35px">CAN Frame</span>
<span class="t g" style="left:559px;top:136.3px">Rx</span>
<span class="t g" style="left:597.5px;top:136.3px">8</span>
<span class="t g" style="left:630.6px;top:136.3px">01</span><span class="t g" style="left:645.5px;top:136.3px">03</span><span class="t g" style="left:660.3px;top:136.3px">00</span><span class="t g" style="left:675.1px;top:136.3px">10</span><span class="t g" style="left:690.0px;top:136.3px">07</span><span class="t g" style="left:704.9px;top:136.3px">00</span><span class="t g" style="left:719.7px;top:136.3px">00</span><span class="t g" style="left:734.5px;top:136.3px">00</span>
<svg class="ic" style="left:18px;top:151px" width="7" height="7" viewBox="0 0 7 7"><path d="M0.5 1.5 Q0.5 0.5 1.5 0.5 H5.5 Q6.5 0.5 6.5 1.5 V3.5 Q6.5 4.5 5.5 4.5 H3.5 L2 6.5 V4.5 H1.5 Q0.5 4.5 0.5 3.5 Z" fill="#f8f8f8" stroke="#dedede" stroke-width="0.8"/></svg>
<div class="doth" style="left:34px;top:154px;width:9px"></div>
<svg class="ic" style="left:43px;top:150px" width="11" height="8" viewBox="0 0 11 8"><rect x="0.5" y="0.5" width="10" height="7" fill="#9cbad6" stroke="#6f88a4"/><rect x="1" y="1" width="9" height="2.5" fill="#e2ecf5"/><path d="M1.5 2 L3.5 4.5 L6.5 4.5 L9.5 1.5 M8 5.5 L9.5 7" stroke="#4a5e78" stroke-width="0.9" fill="none"/></svg>
<span class="t g" style="left:58.30000000000001px;top:149.7px">0.113621</span>
<span class="t g" style="left:149.60000000000002px;top:149.7px">CAN 1</span>
<span class="t g" style="left:219.5px;top:149.7px">355</span>
<span class="t g" style="left:399.9px;top:149.7px;letter-spacing:-0.35px">CAN Frame</span>
<span class="t g" style="left:559px;top:149.7px">Rx</span>
<span class="t g" style="left:597.5px;top:149.7px">8</span>
<span class="t g" style="left:630.6px;top:149.7px">30</span><span class="t g" style="left:645.5px;top:149.7px">32</span><span class="t g" style="left:660.3px;top:149.7px">5F</span><span class="t g" style="left:675.1px;top:149.7px">30</span><span class="t g" style="left:690.0px;top:149.7px">32</span><span class="t g" style="left:704.9px;top:149.7px">5F</span><span class="t g" style="left:719.7px;top:149.7px">30</span><span class="t g" style="left:734.5px;top:149.7px">32</span>
<svg class="ic" style="left:18px;top:165px" width="7" height="7" viewBox="0 0 7 7"><path d="M0.5 1.5 Q0.5 0.5 1.5 0.5 H5.5 Q6.5 0.5 6.5 1.5 V3.5 Q6.5 4.5 5.5 4.5 H3.5 L2 6.5 V4.5 H1.5 Q0.5 4.5 0.5 3.5 Z" fill="#f8f8f8" stroke="#dedede" stroke-width="0.8"/></svg>
<svg class="ic" style="left:30px;top:164px" width="7" height="7" viewBox="0 0 7 7"><rect x="0.5" y="0.5" width="6" height="6" rx="0.8" fill="#f2f2f2" stroke="#a8a8a8"/><path d="M1.4 3.5 H5.6" stroke="#4a62b8" stroke-width="1"/></svg>
<div class="doth" style="left:38px;top:167px;width:5px"></div>
<svg class="ic" style="left:43px;top:164px" width="11" height="8" viewBox="0 0 11 8"><rect x="0.5" y="0.5" width="10" height="7" fill="#9cbad6" stroke="#6f88a4"/><rect x="1" y="1" width="9" height="2.5" fill="#e2ecf5"/><path d="M1.5 2 L3.5 4.5 L6.5 4.5 L9.5 1.5 M8 5.5 L9.5 7" stroke="#4a5e78" stroke-width="0.9" fill="none"/></svg>
<span class="t g r" style="left:58.30000000000001px;top:163.0px">0.122740</span>
<span class="t g r" style="left:149.60000000000002px;top:163.0px">CAN 2</span>
<span class="t g r" style="left:399.9px;top:163.0px;letter-spacing:-0.35px">CAN Error</span>
<span class="t g r" style="left:559px;top:163.0px">RxErr</span>
<span class="t g r" style="left:630.6px;top:163.0px">ECC: 100000101xxxxx, Stuff Error, Bit Position = 23</span>
<div class="doth" style="left:49px;top:180px;width:8px"></div>
<svg class="ic" style="left:57px;top:177px" width="12" height="8" viewBox="0 0 12 8"><path d="M0.5 5.5 Q3 0 5.5 2.5 Q8 5.5 11.5 6" stroke="#7aa0cc" stroke-width="1.1" fill="none"/></svg>
<span class="t g" style="left:73.19999999999999px;top:176.4px">ECC</span>
<span class="t g" style="left:120.5px;top:176.4px">:</span>
<span class="t g" style="left:140.8px;top:176.4px">100000101xxxxx</span>
<div class="doth" style="left:49px;top:194px;width:8px"></div>
<svg class="ic" style="left:57px;top:191px" width="12" height="8" viewBox="0 0 12 8"><path d="M0.5 5.5 Q3 0 5.5 2.5 Q8 5.5 11.5 6" stroke="#7aa0cc" stroke-width="1.1" fill="none"/></svg>
<span class="t g" style="left:73.19999999999999px;top:189.8px">Code</span>
<span class="t g" style="left:120.5px;top:189.8px">:</span>
<span class="t g" style="left:140.8px;top:189.8px">Stuff Error</span>
<div class="doth" style="left:49px;top:207px;width:8px"></div>
<svg class="ic" style="left:57px;top:204px" width="12" height="8" viewBox="0 0 12 8"><path d="M0.5 5.5 Q3 0 5.5 2.5 Q8 5.5 11.5 6" stroke="#7aa0cc" stroke-width="1.1" fill="none"/></svg>
<span class="t g" style="left:73.19999999999999px;top:203.1px">Position</span>
<span class="t g" style="left:120.5px;top:203.1px">:</span>
<span class="t g" style="left:140.8px;top:203.1px">23</span>
<div class="doth" style="left:49px;top:221px;width:8px"></div>
<svg class="ic" style="left:57px;top:217px" width="12" height="8" viewBox="0 0 12 8"><path d="M0.5 5.5 Q3 0 5.5 2.5 Q8 5.5 11.5 6" stroke="#7aa0cc" stroke-width="1.1" fill="none"/></svg>
<span class="t g" style="left:73.19999999999999px;top:216.5px">ID</span>
<span class="t g" style="left:120.5px;top:216.5px">:</span>
<span class="t g" style="left:140.8px;top:216.5px">0011000000111b (607)</span>
<div class="doth" style="left:49px;top:234px;width:8px"></div>
<svg class="ic" style="left:57px;top:231px" width="12" height="8" viewBox="0 0 12 8"><path d="M0.5 5.5 Q3 0 5.5 2.5 Q8 5.5 11.5 6" stroke="#7aa0cc" stroke-width="1.1" fill="none"/></svg>
<span class="t g" style="left:73.19999999999999px;top:229.9px">DLC</span>
<span class="t g" style="left:120.5px;top:229.9px">:</span>
<span class="t g" style="left:140.8px;top:229.9px">6</span>
<div class="doth" style="left:49px;top:247px;width:8px"></div>
<svg class="ic" style="left:57px;top:244px" width="12" height="8" viewBox="0 0 12 8"><path d="M0.5 5.5 Q3 0 5.5 2.5 Q8 5.5 11.5 6" stroke="#7aa0cc" stroke-width="1.1" fill="none"/></svg>
<span class="t g" style="left:73.19999999999999px;top:243.3px">Data 00-05:</span>
<span class="t g" style="left:140.8px;top:243.3px">30</span><span class="t g" style="left:155.6px;top:243.3px">32</span><span class="t g" style="left:170.4px;top:243.3px">5F</span><span class="t g" style="left:185.2px;top:243.3px">30</span><span class="t g" style="left:200.0px;top:243.3px">32</span><span class="t g" style="left:214.8px;top:243.3px">5F</span>
<svg class="ic" style="left:18px;top:258px" width="7" height="7" viewBox="0 0 7 7"><path d="M0.5 1.5 Q0.5 0.5 1.5 0.5 H5.5 Q6.5 0.5 6.5 1.5 V3.5 Q6.5 4.5 5.5 4.5 H3.5 L2 6.5 V4.5 H1.5 Q0.5 4.5 0.5 3.5 Z" fill="#f8f8f8" stroke="#dedede" stroke-width="0.8"/></svg>
<svg class="ic" style="left:30px;top:257px" width="7" height="7" viewBox="0 0 7 7"><rect x="0.5" y="0.5" width="6" height="6" rx="0.8" fill="#f2f2f2" stroke="#a8a8a8"/><path d="M1.4 3.5 H5.6" stroke="#4a62b8" stroke-width="1"/><path d="M3.5 1.4 V5.6" stroke="#4a62b8" stroke-width="1"/></svg>
<div class="doth" style="left:38px;top:261px;width:5px"></div>
<svg class="ic" style="left:43px;top:257px" width="11" height="8" viewBox="0 0 11 8"><rect x="0.5" y="0.5" width="10" height="7" fill="#9cbad6" stroke="#6f88a4"/><rect x="1" y="1" width="9" height="2.5" fill="#e2ecf5"/><path d="M1.5 2 L3.5 4.5 L6.5 4.5 L9.5 1.5 M8 5.5 L9.5 7" stroke="#4a5e78" stroke-width="0.9" fill="none"/></svg>
<span class="t g r" style="left:58.30000000000001px;top:256.6px">0.122823</span>
<span class="t g r" style="left:149.60000000000002px;top:256.6px">CAN 2</span>
<span class="t g r" style="left:399.9px;top:256.6px;letter-spacing:-0.35px">CAN Error</span>
<span class="t g r" style="left:559px;top:256.6px">RxErr</span>
<span class="t g r" style="left:630.6px;top:256.6px">ECC: 100000101xxxxx, Stuff Error, Bit Position = 23</span>
<svg class="ic" style="left:18px;top:272px" width="7" height="7" viewBox="0 0 7 7"><path d="M0.5 1.5 Q0.5 0.5 1.5 0.5 H5.5 Q6.5 0.5 6.5 1.5 V3.5 Q6.5 4.5 5.5 4.5 H3.5 L2 6.5 V4.5 H1.5 Q0.5 4.5 0.5 3.5 Z" fill="#f8f8f8" stroke="#dedede" stroke-width="0.8"/></svg>
<div style="left:56px;top:268.10px;width:878px;height:13.37px;background:#0078d7;border:1px dotted #e0a080"></div>
<svg class="ic" style="left:30px;top:271px" width="7" height="7" viewBox="0 0 7 7"><rect x="0.5" y="0.5" width="6" height="6" rx="0.8" fill="#f2f2f2" stroke="#a8a8a8"/><path d="M1.4 3.5 H5.6" stroke="#4a62b8" stroke-width="1"/><path d="M3.5 1.4 V5.6" stroke="#4a62b8" stroke-width="1"/></svg>
<div class="doth" style="left:38px;top:274px;width:5px"></div>
<svg class="ic" style="left:43px;top:271px" width="11" height="8" viewBox="0 0 11 8"><rect x="0.5" y="0.5" width="10" height="7" fill="#9cbad6" stroke="#6f88a4"/><rect x="1" y="1" width="9" height="2.5" fill="#e2ecf5"/><path d="M1.5 2 L3.5 4.5 L6.5 4.5 L9.5 1.5 M8 5.5 L9.5 7" stroke="#4a5e78" stroke-width="0.9" fill="none"/></svg>
<span class="t g" style="left:58.30000000000001px;top:270.0px;color:#fff">0.122906</span>
<span class="t g" style="left:149.60000000000002px;top:270.0px;color:#fff">CAN 2</span>
<span class="t g" style="left:399.9px;top:270.0px;letter-spacing:-0.35px;color:#fff">CAN Error</span>
<span class="t g" style="left:559px;top:270.0px;color:#fff">RxErr</span>
<span class="t g" style="left:630.6px;top:270.0px;color:#fff">ECC: 100000101xxxxx, Stuff Error, Bit Position = 23</span>
<svg class="ic" style="left:18px;top:285px" width="7" height="7" viewBox="0 0 7 7"><path d="M0.5 1.5 Q0.5 0.5 1.5 0.5 H5.5 Q6.5 0.5 6.5 1.5 V3.5 Q6.5 4.5 5.5 4.5 H3.5 L2 6.5 V4.5 H1.5 Q0.5 4.5 0.5 3.5 Z" fill="#f8f8f8" stroke="#dedede" stroke-width="0.8"/></svg>
<svg class="ic" style="left:30px;top:284px" width="7" height="7" viewBox="0 0 7 7"><rect x="0.5" y="0.5" width="6" height="6" rx="0.8" fill="#f2f2f2" stroke="#a8a8a8"/><path d="M1.4 3.5 H5.6" stroke="#4a62b8" stroke-width="1"/><path d="M3.5 1.4 V5.6" stroke="#4a62b8" stroke-width="1"/></svg>
<div class="doth" style="left:38px;top:287px;width:5px"></div>
<svg class="ic" style="left:43px;top:284px" width="11" height="8" viewBox="0 0 11 8"><rect x="0.5" y="0.5" width="10" height="7" fill="#9cbad6" stroke="#6f88a4"/><rect x="1" y="1" width="9" height="2.5" fill="#e2ecf5"/><path d="M1.5 2 L3.5 4.5 L6.5 4.5 L9.5 1.5 M8 5.5 L9.5 7" stroke="#4a5e78" stroke-width="0.9" fill="none"/></svg>
<span class="t g r" style="left:58.30000000000001px;top:283.4px">0.122989</span>
<span class="t g r" style="left:149.60000000000002px;top:283.4px">CAN 2</span>
<span class="t g r" style="left:399.9px;top:283.4px;letter-spacing:-0.35px">CAN Error</span>
<span class="t g r" style="left:559px;top:283.4px">RxErr</span>
<span class="t g r" style="left:630.6px;top:283.4px">ECC: 100000101xxxxx, Stuff Error, Bit Position = 23</span>
<svg class="ic" style="left:18px;top:299px" width="7" height="7" viewBox="0 0 7 7"><path d="M0.5 1.5 Q0.5 0.5 1.5 0.5 H5.5 Q6.5 0.5 6.5 1.5 V3.5 Q6.5 4.5 5.5 4.5 H3.5 L2 6.5 V4.5 H1.5 Q0.5 4.5 0.5 3.5 Z" fill="#f8f8f8" stroke="#dedede" stroke-width="0.8"/></svg>
<svg class="ic" style="left:30px;top:297px" width="7" height="7" viewBox="0 0 7 7"><rect x="0.5" y="0.5" width="6" height="6" rx="0.8" fill="#f2f2f2" stroke="#a8a8a8"/><path d="M1.4 3.5 H5.6" stroke="#4a62b8" stroke-width="1"/><path d="M3.5 1.4 V5.6" stroke="#4a62b8" stroke-width="1"/></svg>
<div class="doth" style="left:38px;top:301px;width:5px"></div>
<svg class="ic" style="left:43px;top:298px" width="11" height="8" viewBox="0 0 11 8"><rect x="0.5" y="0.5" width="10" height="7" fill="#9cbad6" stroke="#6f88a4"/><rect x="1" y="1" width="9" height="2.5" fill="#e2ecf5"/><path d="M1.5 2 L3.5 4.5 L6.5 4.5 L9.5 1.5 M8 5.5 L9.5 7" stroke="#4a5e78" stroke-width="0.9" fill="none"/></svg>
<span class="t g r" style="left:58.30000000000001px;top:296.7px">0.123072</span>
<span class="t g r" style="left:149.60000000000002px;top:296.7px">CAN 2</span>
<span class="t g r" style="left:399.9px;top:296.7px;letter-spacing:-0.35px">CAN Error</span>
<span class="t g r" style="left:559px;top:296.7px">RxErr</span>
<span class="t g r" style="left:630.6px;top:296.7px">ECC: 100000101xxxxx, Stuff Error, Bit Position = 23</span>
<svg class="ic" style="left:18px;top:312px" width="7" height="7" viewBox="0 0 7 7"><path d="M0.5 1.5 Q0.5 0.5 1.5 0.5 H5.5 Q6.5 0.5 6.5 1.5 V3.5 Q6.5 4.5 5.5 4.5 H3.5 L2 6.5 V4.5 H1.5 Q0.5 4.5 0.5 3.5 Z" fill="#f8f8f8" stroke="#dedede" stroke-width="0.8"/></svg>
<svg class="ic" style="left:30px;top:311px" width="7" height="7" viewBox="0 0 7 7"><rect x="0.5" y="0.5" width="6" height="6" rx="0.8" fill="#f2f2f2" stroke="#a8a8a8"/><path d="M1.4 3.5 H5.6" stroke="#4a62b8" stroke-width="1"/><path d="M3.5 1.4 V5.6" stroke="#4a62b8" stroke-width="1"/></svg>
<div class="doth" style="left:38px;top:314px;width:5px"></div>
<svg class="ic" style="left:43px;top:311px" width="11" height="8" viewBox="0 0 11 8"><rect x="0.5" y="0.5" width="10" height="7" fill="#9cbad6" stroke="#6f88a4"/><rect x="1" y="1" width="9" height="2.5" fill="#e2ecf5"/><path d="M1.5 2 L3.5 4.5 L6.5 4.5 L9.5 1.5 M8 5.5 L9.5 7" stroke="#4a5e78" stroke-width="0.9" fill="none"/></svg>
<span class="t g r" style="left:58.30000000000001px;top:310.1px">0.123155</span>
<span class="t g r" style="left:149.60000000000002px;top:310.1px">CAN 2</span>
<span class="t g r" style="left:399.9px;top:310.1px;letter-spacing:-0.35px">CAN Error</span>
<span class="t g r" style="left:559px;top:310.1px">RxErr</span>
<span class="t g r" style="left:630.6px;top:310.1px">ECC: 100000101xxxxx, Stuff Error, Bit Position = 23</span>
<svg class="ic" style="left:18px;top:325px" width="7" height="7" viewBox="0 0 7 7"><path d="M0.5 1.5 Q0.5 0.5 1.5 0.5 H5.5 Q6.5 0.5 6.5 1.5 V3.5 Q6.5 4.5 5.5 4.5 H3.5 L2 6.5 V4.5 H1.5 Q0.5 4.5 0.5 3.5 Z" fill="#f8f8f8" stroke="#dedede" stroke-width="0.8"/></svg>
<svg class="ic" style="left:30px;top:324px" width="7" height="7" viewBox="0 0 7 7"><rect x="0.5" y="0.5" width="6" height="6" rx="0.8" fill="#f2f2f2" stroke="#a8a8a8"/><path d="M1.4 3.5 H5.6" stroke="#4a62b8" stroke-width="1"/><path d="M3.5 1.4 V5.6" stroke="#4a62b8" stroke-width="1"/></svg>
<div class="doth" style="left:38px;top:328px;width:5px"></div>
<svg class="ic" style="left:43px;top:324px" width="11" height="8" viewBox="0 0 11 8"><rect x="0.5" y="0.5" width="10" height="7" fill="#9cbad6" stroke="#6f88a4"/><rect x="1" y="1" width="9" height="2.5" fill="#e2ecf5"/><path d="M1.5 2 L3.5 4.5 L6.5 4.5 L9.5 1.5 M8 5.5 L9.5 7" stroke="#4a5e78" stroke-width="0.9" fill="none"/></svg>
<span class="t g r" style="left:58.30000000000001px;top:323.5px">0.123238</span>
<span class="t g r" style="left:149.60000000000002px;top:323.5px">CAN 2</span>
<span class="t g r" style="left:399.9px;top:323.5px;letter-spacing:-0.35px">CAN Error</span>
<span class="t g r" style="left:559px;top:323.5px">RxErr</span>
<span class="t g r" style="left:630.6px;top:323.5px">ECC: 100000101xxxxx, Stuff Error, Bit Position = 23</span>
<svg class="ic" style="left:18px;top:339px" width="7" height="7" viewBox="0 0 7 7"><path d="M0.5 1.5 Q0.5 0.5 1.5 0.5 H5.5 Q6.5 0.5 6.5 1.5 V3.5 Q6.5 4.5 5.5 4.5 H3.5 L2 6.5 V4.5 H1.5 Q0.5 4.5 0.5 3.5 Z" fill="#f8f8f8" stroke="#dedede" stroke-width="0.8"/></svg>
<svg class="ic" style="left:30px;top:337px" width="7" height="7" viewBox="0 0 7 7"><rect x="0.5" y="0.5" width="6" height="6" rx="0.8" fill="#f2f2f2" stroke="#a8a8a8"/><path d="M1.4 3.5 H5.6" stroke="#4a62b8" stroke-width="1"/><path d="M3.5 1.4 V5.6" stroke="#4a62b8" stroke-width="1"/></svg>
<div class="doth" style="left:38px;top:341px;width:5px"></div>
<svg class="ic" style="left:43px;top:338px" width="11" height="8" viewBox="0 0 11 8"><rect x="0.5" y="0.5" width="10" height="7" fill="#9cbad6" stroke="#6f88a4"/><rect x="1" y="1" width="9" height="2.5" fill="#e2ecf5"/><path d="M1.5 2 L3.5 4.5 L6.5 4.5 L9.5 1.5 M8 5.5 L9.5 7" stroke="#4a5e78" stroke-width="0.9" fill="none"/></svg>
<span class="t g r" style="left:58.30000000000001px;top:336.8px">0.123321</span>
<span class="t g r" style="left:149.60000000000002px;top:336.8px">CAN 2</span>
<span class="t g r" style="left:399.9px;top:336.8px;letter-spacing:-0.35px">CAN Error</span>
<span class="t g r" style="left:559px;top:336.8px">RxErr</span>
<span class="t g r" style="left:630.6px;top:336.8px">ECC: 100000101xxxxx, Stuff Error, Bit Position = 23</span>
<svg class="ic" style="left:18px;top:352px" width="7" height="7" viewBox="0 0 7 7"><path d="M0.5 1.5 Q0.5 0.5 1.5 0.5 H5.5 Q6.5 0.5 6.5 1.5 V3.5 Q6.5 4.5 5.5 4.5 H3.5 L2 6.5 V4.5 H1.5 Q0.5 4.5 0.5 3.5 Z" fill="#f8f8f8" stroke="#dedede" stroke-width="0.8"/></svg>
<svg class="ic" style="left:30px;top:351px" width="7" height="7" viewBox="0 0 7 7"><rect x="0.5" y="0.5" width="6" height="6" rx="0.8" fill="#f2f2f2" stroke="#a8a8a8"/><path d="M1.4 3.5 H5.6" stroke="#4a62b8" stroke-width="1"/><path d="M3.5 1.4 V5.6" stroke="#4a62b8" stroke-width="1"/></svg>
<div class="doth" style="left:38px;top:354px;width:5px"></div>
<svg class="ic" style="left:43px;top:351px" width="11" height="8" viewBox="0 0 11 8"><rect x="0.5" y="0.5" width="10" height="7" fill="#9cbad6" stroke="#6f88a4"/><rect x="1" y="1" width="9" height="2.5" fill="#e2ecf5"/><path d="M1.5 2 L3.5 4.5 L6.5 4.5 L9.5 1.5 M8 5.5 L9.5 7" stroke="#4a5e78" stroke-width="0.9" fill="none"/></svg>
<span class="t g r" style="left:58.30000000000001px;top:350.2px">0.123404</span>
<span class="t g r" style="left:149.60000000000002px;top:350.2px">CAN 2</span>
<span class="t g r" style="left:399.9px;top:350.2px;letter-spacing:-0.35px">CAN Error</span>
<span class="t g r" style="left:559px;top:350.2px">RxErr</span>
<span class="t g r" style="left:630.6px;top:350.2px">ECC: 100000101xxxxx, Stuff Error, Bit Position = 23</span>
<svg class="ic" style="left:18px;top:365px" width="7" height="7" viewBox="0 0 7 7"><path d="M0.5 1.5 Q0.5 0.5 1.5 0.5 H5.5 Q6.5 0.5 6.5 1.5 V3.5 Q6.5 4.5 5.5 4.5 H3.5 L2 6.5 V4.5 H1.5 Q0.5 4.5 0.5 3.5 Z" fill="#f8f8f8" stroke="#dedede" stroke-width="0.8"/></svg>
<svg class="ic" style="left:30px;top:364px" width="7" height="7" viewBox="0 0 7 7"><rect x="0.5" y="0.5" width="6" height="6" rx="0.8" fill="#f2f2f2" stroke="#a8a8a8"/><path d="M1.4 3.5 H5.6" stroke="#4a62b8" stroke-width="1"/><path d="M3.5 1.4 V5.6" stroke="#4a62b8" stroke-width="1"/></svg>
<div class="doth" style="left:38px;top:368px;width:5px"></div>
<svg class="ic" style="left:43px;top:364px" width="11" height="8" viewBox="0 0 11 8"><rect x="0.5" y="0.5" width="10" height="7" fill="#9cbad6" stroke="#6f88a4"/><rect x="1" y="1" width="9" height="2.5" fill="#e2ecf5"/><path d="M1.5 2 L3.5 4.5 L6.5 4.5 L9.5 1.5 M8 5.5 L9.5 7" stroke="#4a5e78" stroke-width="0.9" fill="none"/></svg>
<span class="t g r" style="left:58.30000000000001px;top:363.6px">0.123487</span>
<span class="t g r" style="left:149.60000000000002px;top:363.6px">CAN 2</span>
<span class="t g r" style="left:399.9px;top:363.6px;letter-spacing:-0.35px">CAN Error</span>
<span class="t g r" style="left:559px;top:363.6px">RxErr</span>
<span class="t g r" style="left:630.6px;top:363.6px">ECC: 100000101xxxxx, Stuff Error, Bit Position = 23</span>
<svg class="ic" style="left:18px;top:379px" width="7" height="7" viewBox="0 0 7 7"><path d="M0.5 1.5 Q0.5 0.5 1.5 0.5 H5.5 Q6.5 0.5 6.5 1.5 V3.5 Q6.5 4.5 5.5 4.5 H3.5 L2 6.5 V4.5 H1.5 Q0.5 4.5 0.5 3.5 Z" fill="#f8f8f8" stroke="#dedede" stroke-width="0.8"/></svg>
<svg class="ic" style="left:30px;top:378px" width="7" height="7" viewBox="0 0 7 7"><rect x="0.5" y="0.5" width="6" height="6" rx="0.8" fill="#f2f2f2" stroke="#a8a8a8"/><path d="M1.4 3.5 H5.6" stroke="#4a62b8" stroke-width="1"/><path d="M3.5 1.4 V5.6" stroke="#4a62b8" stroke-width="1"/></svg>
<div class="doth" style="left:38px;top:381px;width:5px"></div>
<svg class="ic" style="left:43px;top:378px" width="11" height="8" viewBox="0 0 11 8"><rect x="0.5" y="0.5" width="10" height="7" fill="#9cbad6" stroke="#6f88a4"/><rect x="1" y="1" width="9" height="2.5" fill="#e2ecf5"/><path d="M1.5 2 L3.5 4.5 L6.5 4.5 L9.5 1.5 M8 5.5 L9.5 7" stroke="#4a5e78" stroke-width="0.9" fill="none"/></svg>
<span class="t g r" style="left:58.30000000000001px;top:377.0px">0.123570</span>
<span class="t g r" style="left:149.60000000000002px;top:377.0px">CAN 2</span>
<span class="t g r" style="left:399.9px;top:377.0px;letter-spacing:-0.35px">CAN Error</span>
<span class="t g r" style="left:559px;top:377.0px">RxErr</span>
<span class="t g r" style="left:630.6px;top:377.0px">ECC: 100000101xxxxx, Stuff Error, Bit Position = 23</span>
<svg class="ic" style="left:18px;top:392px" width="7" height="7" viewBox="0 0 7 7"><path d="M0.5 1.5 Q0.5 0.5 1.5 0.5 H5.5 Q6.5 0.5 6.5 1.5 V3.5 Q6.5 4.5 5.5 4.5 H3.5 L2 6.5 V4.5 H1.5 Q0.5 4.5 0.5 3.5 Z" fill="#f8f8f8" stroke="#dedede" stroke-width="0.8"/></svg>
<svg class="ic" style="left:30px;top:391px" width="7" height="7" viewBox="0 0 7 7"><rect x="0.5" y="0.5" width="6" height="6" rx="0.8" fill="#f2f2f2" stroke="#a8a8a8"/><path d="M1.4 3.5 H5.6" stroke="#4a62b8" stroke-width="1"/><path d="M3.5 1.4 V5.6" stroke="#4a62b8" stroke-width="1"/></svg>
<div class="doth" style="left:38px;top:394px;width:5px"></div>
<svg class="ic" style="left:43px;top:391px" width="11" height="8" viewBox="0 0 11 8"><rect x="0.5" y="0.5" width="10" height="7" fill="#9cbad6" stroke="#6f88a4"/><rect x="1" y="1" width="9" height="2.5" fill="#e2ecf5"/><path d="M1.5 2 L3.5 4.5 L6.5 4.5 L9.5 1.5 M8 5.5 L9.5 7" stroke="#4a5e78" stroke-width="0.9" fill="none"/></svg>
<span class="t g r" style="left:58.30000000000001px;top:390.3px">0.123653</span>
<span class="t g r" style="left:149.60000000000002px;top:390.3px">CAN 2</span>
<span class="t g r" style="left:399.9px;top:390.3px;letter-spacing:-0.35px">CAN Error</span>
<span class="t g r" style="left:559px;top:390.3px">RxErr</span>
<span class="t g r" style="left:630.6px;top:390.3px">ECC: 100000101xxxxx, Stuff Error, Bit Position = 23</span>
<svg class="ic" style="left:18px;top:405px" width="7" height="7" viewBox="0 0 7 7"><path d="M0.5 1.5 Q0.5 0.5 1.5 0.5 H5.5 Q6.5 0.5 6.5 1.5 V3.5 Q6.5 4.5 5.5 4.5 H3.5 L2 6.5 V4.5 H1.5 Q0.5 4.5 0.5 3.5 Z" fill="#f8f8f8" stroke="#dedede" stroke-width="0.8"/></svg>
<svg class="ic" style="left:30px;top:404px" width="7" height="7" viewBox="0 0 7 7"><rect x="0.5" y="0.5" width="6" height="6" rx="0.8" fill="#f2f2f2" stroke="#a8a8a8"/><path d="M1.4 3.5 H5.6" stroke="#4a62b8" stroke-width="1"/><path d="M3.5 1.4 V5.6" stroke="#4a62b8" stroke-width="1"/></svg>
<div class="doth" style="left:38px;top:408px;width:5px"></div>
<svg class="ic" style="left:43px;top:404px" width="11" height="8" viewBox="0 0 11 8"><rect x="0.5" y="0.5" width="10" height="7" fill="#9cbad6" stroke="#6f88a4"/><rect x="1" y="1" width="9" height="2.5" fill="#e2ecf5"/><path d="M1.5 2 L3.5 4.5 L6.5 4.5 L9.5 1.5 M8 5.5 L9.5 7" stroke="#4a5e78" stroke-width="0.9" fill="none"/></svg>
<span class="t g r" style="left:58.30000000000001px;top:403.7px">0.123736</span>
<span class="t g r" style="left:149.60000000000002px;top:403.7px">CAN 2</span>
<span class="t g r" style="left:399.9px;top:403.7px;letter-spacing:-0.35px">CAN Error</span>
<span class="t g r" style="left:559px;top:403.7px">RxErr</span>
<span class="t g r" style="left:630.6px;top:403.7px">ECC: 100000101xxxxx, Stuff Error, Bit Position = 23</span>
<svg class="ic" style="left:18px;top:419px" width="7" height="7" viewBox="0 0 7 7"><path d="M0.5 1.5 Q0.5 0.5 1.5 0.5 H5.5 Q6.5 0.5 6.5 1.5 V3.5 Q6.5 4.5 5.5 4.5 H3.5 L2 6.5 V4.5 H1.5 Q0.5 4.5 0.5 3.5 Z" fill="#f8f8f8" stroke="#dedede" stroke-width="0.8"/></svg>
<svg class="ic" style="left:30px;top:418px" width="7" height="7" viewBox="0 0 7 7"><rect x="0.5" y="0.5" width="6" height="6" rx="0.8" fill="#f2f2f2" stroke="#a8a8a8"/><path d="M1.4 3.5 H5.6" stroke="#4a62b8" stroke-width="1"/><path d="M3.5 1.4 V5.6" stroke="#4a62b8" stroke-width="1"/></svg>
<div class="doth" style="left:38px;top:421px;width:5px"></div>
<svg class="ic" style="left:43px;top:418px" width="11" height="8" viewBox="0 0 11 8"><rect x="0.5" y="0.5" width="10" height="7" fill="#9cbad6" stroke="#6f88a4"/><rect x="1" y="1" width="9" height="2.5" fill="#e2ecf5"/><path d="M1.5 2 L3.5 4.5 L6.5 4.5 L9.5 1.5 M8 5.5 L9.5 7" stroke="#4a5e78" stroke-width="0.9" fill="none"/></svg>
<span class="t g r" style="left:58.30000000000001px;top:417.1px">0.123819</span>
<span class="t g r" style="left:149.60000000000002px;top:417.1px">CAN 2</span>
<span class="t g r" style="left:399.9px;top:417.1px;letter-spacing:-0.35px">CAN Error</span>
<span class="t g r" style="left:559px;top:417.1px">RxErr</span>
<span class="t g r" style="left:630.6px;top:417.1px">ECC: 100000101xxxxx, Stuff Error, Bit Position = 23</span>
<svg class="ic" style="left:18px;top:432px" width="7" height="7" viewBox="0 0 7 7"><path d="M0.5 1.5 Q0.5 0.5 1.5 0.5 H5.5 Q6.5 0.5 6.5 1.5 V3.5 Q6.5 4.5 5.5 4.5 H3.5 L2 6.5 V4.5 H1.5 Q0.5 4.5 0.5 3.5 Z" fill="#f8f8f8" stroke="#dedede" stroke-width="0.8"/></svg>
<svg class="ic" style="left:30px;top:431px" width="7" height="7" viewBox="0 0 7 7"><rect x="0.5" y="0.5" width="6" height="6" rx="0.8" fill="#f2f2f2" stroke="#a8a8a8"/><path d="M1.4 3.5 H5.6" stroke="#4a62b8" stroke-width="1"/><path d="M3.5 1.4 V5.6" stroke="#4a62b8" stroke-width="1"/></svg>
<div class="doth" style="left:38px;top:435px;width:5px"></div>
<svg class="ic" style="left:43px;top:431px" width="11" height="8" viewBox="0 0 11 8"><rect x="0.5" y="0.5" width="10" height="7" fill="#9cbad6" stroke="#6f88a4"/><rect x="1" y="1" width="9" height="2.5" fill="#e2ecf5"/><path d="M1.5 2 L3.5 4.5 L6.5 4.5 L9.5 1.5 M8 5.5 L9.5 7" stroke="#4a5e78" stroke-width="0.9" fill="none"/></svg>
<span class="t g r" style="left:58.30000000000001px;top:430.4px">0.123902</span>
<span class="t g r" style="left:149.60000000000002px;top:430.4px">CAN 2</span>
<span class="t g r" style="left:399.9px;top:430.4px;letter-spacing:-0.35px">CAN Error</span>
<span class="t g r" style="left:559px;top:430.4px">RxErr</span>
<span class="t g r" style="left:630.6px;top:430.4px">ECC: 100000101xxxxx, Stuff Error, Bit Position = 23</span>
<svg class="ic" style="left:18px;top:446px" width="7" height="7" viewBox="0 0 7 7"><path d="M0.5 1.5 Q0.5 0.5 1.5 0.5 H5.5 Q6.5 0.5 6.5 1.5 V3.5 Q6.5 4.5 5.5 4.5 H3.5 L2 6.5 V4.5 H1.5 Q0.5 4.5 0.5 3.5 Z" fill="#f8f8f8" stroke="#dedede" stroke-width="0.8"/></svg>
<svg class="ic" style="left:30px;top:444px" width="7" height="7" viewBox="0 0 7 7"><rect x="0.5" y="0.5" width="6" height="6" rx="0.8" fill="#f2f2f2" stroke="#a8a8a8"/><path d="M1.4 3.5 H5.6" stroke="#4a62b8" stroke-width="1"/><path d="M3.5 1.4 V5.6" stroke="#4a62b8" stroke-width="1"/></svg>
<div class="doth" style="left:38px;top:448px;width:5px"></div>
<svg class="ic" style="left:43px;top:445px" width="11" height="8" viewBox="0 0 11 8"><rect x="0.5" y="0.5" width="10" height="7" fill="#9cbad6" stroke="#6f88a4"/><rect x="1" y="1" width="9" height="2.5" fill="#e2ecf5"/><path d="M1.5 2 L3.5 4.5 L6.5 4.5 L9.5 1.5 M8 5.5 L9.5 7" stroke="#4a5e78" stroke-width="0.9" fill="none"/></svg>
<span class="t g r" style="left:58.30000000000001px;top:443.8px">0.123985</span>
<span class="t g r" style="left:149.60000000000002px;top:443.8px">CAN 2</span>
<span class="t g r" style="left:399.9px;top:443.8px;letter-spacing:-0.35px">CAN Error</span>
<span class="t g r" style="left:559px;top:443.8px">RxErr</span>
<span class="t g r" style="left:630.6px;top:443.8px">ECC: 100000101xxxxx, Stuff Error, Bit Position = 23</span>
<svg class="ic" style="left:18px;top:459px" width="7" height="7" viewBox="0 0 7 7"><path d="M0.5 1.5 Q0.5 0.5 1.5 0.5 H5.5 Q6.5 0.5 6.5 1.5 V3.5 Q6.5 4.5 5.5 4.5 H3.5 L2 6.5 V4.5 H1.5 Q0.5 4.5 0.5 3.5 Z" fill="#f8f8f8" stroke="#dedede" stroke-width="0.8"/></svg>
<svg class="ic" style="left:30px;top:458px" width="7" height="7" viewBox="0 0 7 7"><rect x="0.5" y="0.5" width="6" height="6" rx="0.8" fill="#f2f2f2" stroke="#a8a8a8"/><path d="M1.4 3.5 H5.6" stroke="#4a62b8" stroke-width="1"/><path d="M3.5 1.4 V5.6" stroke="#4a62b8" stroke-width="1"/></svg>
<div class="doth" style="left:38px;top:461px;width:5px"></div>
<svg class="ic" style="left:43px;top:458px" width="11" height="8" viewBox="0 0 11 8"><rect x="0.5" y="0.5" width="10" height="7" fill="#9cbad6" stroke="#6f88a4"/><rect x="1" y="1" width="9" height="2.5" fill="#e2ecf5"/><path d="M1.5 2 L3.5 4.5 L6.5 4.5 L9.5 1.5 M8 5.5 L9.5 7" stroke="#4a5e78" stroke-width="0.9" fill="none"/></svg>
<span class="t g r" style="left:58.30000000000001px;top:457.2px">0.124081</span>
<span class="t g r" style="left:149.60000000000002px;top:457.2px">CAN 2</span>
<span class="t g r" style="left:399.9px;top:457.2px;letter-spacing:-0.35px">CAN Error</span>
<span class="t g r" style="left:559px;top:457.2px">RxErr</span>
<span class="t g r" style="left:630.6px;top:457.2px">ECC: 100000101xxxxx, Stuff Error, Bit Position = 21</span>
<svg class="ic" style="left:18px;top:472px" width="7" height="7" viewBox="0 0 7 7"><path d="M0.5 1.5 Q0.5 0.5 1.5 0.5 H5.5 Q6.5 0.5 6.5 1.5 V3.5 Q6.5 4.5 5.5 4.5 H3.5 L2 6.5 V4.5 H1.5 Q0.5 4.5 0.5 3.5 Z" fill="#f8f8f8" stroke="#dedede" stroke-width="0.8"/></svg>
<svg class="ic" style="left:30px;top:471px" width="7" height="7" viewBox="0 0 7 7"><rect x="0.5" y="0.5" width="6" height="6" rx="0.8" fill="#f2f2f2" stroke="#a8a8a8"/><path d="M1.4 3.5 H5.6" stroke="#4a62b8" stroke-width="1"/></svg>
<div class="doth" style="left:38px;top:475px;width:5px"></div>
<svg class="ic" style="left:43px;top:471px" width="11" height="8" viewBox="0 0 11 8"><rect x="0.5" y="0.5" width="10" height="7" fill="#9cbad6" stroke="#6f88a4"/><rect x="1" y="1" width="9" height="2.5" fill="#e2ecf5"/><path d="M1.5 2 L3.5 4.5 L6.5 4.5 L9.5 1.5 M8 5.5 L9.5 7" stroke="#4a5e78" stroke-width="0.9" fill="none"/></svg>
<span class="t g r" style="left:58.30000000000001px;top:470.5px">0.124176</span>
<span class="t g r" style="left:149.60000000000002px;top:470.5px">CAN 2</span>
<span class="t g r" style="left:399.9px;top:470.5px;letter-spacing:-0.35px">CAN Error</span>
<span class="t g r" style="left:559px;top:470.5px">RxErr</span>
<span class="t g r" style="left:630.6px;top:470.5px">ECC: 100000101xxxxx, Stuff Error, Bit Position = 21</span>
<div class="doth" style="left:49px;top:488px;width:8px"></div>
<svg class="ic" style="left:57px;top:485px" width="12" height="8" viewBox="0 0 12 8"><path d="M0.5 5.5 Q3 0 5.5 2.5 Q8 5.5 11.5 6" stroke="#7aa0cc" stroke-width="1.1" fill="none"/></svg>
<span class="t g" style="left:73.19999999999999px;top:483.9px">ECC</span>
<span class="t g" style="left:120.5px;top:483.9px">:</span>
<span class="t g" style="left:140.8px;top:483.9px">100000101xxxxx</span>
<div class="doth" style="left:49px;top:501px;width:8px"></div>
<svg class="ic" style="left:57px;top:498px" width="12" height="8" viewBox="0 0 12 8"><path d="M0.5 5.5 Q3 0 5.5 2.5 Q8 5.5 11.5 6" stroke="#7aa0cc" stroke-width="1.1" fill="none"/></svg>
<span class="t g" style="left:73.19999999999999px;top:497.3px">Code</span>
<span class="t g" style="left:120.5px;top:497.3px">:</span>
<span class="t g" style="left:140.8px;top:497.3px">Stuff Error</span>
<div class="doth" style="left:49px;top:515px;width:8px"></div>
<svg class="ic" style="left:57px;top:511px" width="12" height="8" viewBox="0 0 12 8"><path d="M0.5 5.5 Q3 0 5.5 2.5 Q8 5.5 11.5 6" stroke="#7aa0cc" stroke-width="1.1" fill="none"/></svg>
<span class="t g" style="left:73.19999999999999px;top:510.7px">Position</span>
<span class="t g" style="left:120.5px;top:510.7px">:</span>
<span class="t g" style="left:140.8px;top:510.7px">21</span>
<div class="doth" style="left:49px;top:528px;width:8px"></div>
<svg class="ic" style="left:57px;top:525px" width="12" height="8" viewBox="0 0 12 8"><path d="M0.5 5.5 Q3 0 5.5 2.5 Q8 5.5 11.5 6" stroke="#7aa0cc" stroke-width="1.1" fill="none"/></svg>
<span class="t g" style="left:73.19999999999999px;top:524.0px">ID</span>
<span class="t g" style="left:120.5px;top:524.0px">:</span>
<span class="t g" style="left:140.8px;top:524.0px">0011000000111b (607)</span>
<div class="doth" style="left:49px;top:541px;width:8px"></div>
<svg class="ic" style="left:57px;top:538px" width="12" height="8" viewBox="0 0 12 8"><path d="M0.5 5.5 Q3 0 5.5 2.5 Q8 5.5 11.5 6" stroke="#7aa0cc" stroke-width="1.1" fill="none"/></svg>
<span class="t g" style="left:73.19999999999999px;top:537.4px">DLC</span>
<span class="t g" style="left:120.5px;top:537.4px">:</span>
<span class="t g" style="left:140.8px;top:537.4px">7</span>
<div class="doth" style="left:49px;top:555px;width:8px"></div>
<svg class="ic" style="left:57px;top:552px" width="12" height="8" viewBox="0 0 12 8"><path d="M0.5 5.5 Q3 0 5.5 2.5 Q8 5.5 11.5 6" stroke="#7aa0cc" stroke-width="1.1" fill="none"/></svg>
<span class="t g" style="left:73.19999999999999px;top:550.8px">Data 00-06:</span>
<span class="t g" style="left:140.8px;top:550.8px">30</span><span class="t g" style="left:155.6px;top:550.8px">32</span><span class="t g" style="left:170.4px;top:550.8px">5F</span><span class="t g" style="left:185.2px;top:550.8px">30</span><span class="t g" style="left:200.0px;top:550.8px">32</span><span class="t g" style="left:214.8px;top:550.8px">5F</span><span class="t g" style="left:229.6px;top:550.8px">30</span>
<svg class="ic" style="left:18px;top:566px" width="7" height="7" viewBox="0 0 7 7"><path d="M0.5 1.5 Q0.5 0.5 1.5 0.5 H5.5 Q6.5 0.5 6.5 1.5 V3.5 Q6.5 4.5 5.5 4.5 H3.5 L2 6.5 V4.5 H1.5 Q0.5 4.5 0.5 3.5 Z" fill="#f8f8f8" stroke="#dedede" stroke-width="0.8"/></svg>
<svg class="ic" style="left:30px;top:565px" width="7" height="7" viewBox="0 0 7 7"><rect x="0.5" y="0.5" width="6" height="6" rx="0.8" fill="#f2f2f2" stroke="#a8a8a8"/><path d="M1.4 3.5 H5.6" stroke="#4a62b8" stroke-width="1"/><path d="M3.5 1.4 V5.6" stroke="#4a62b8" stroke-width="1"/></svg>
<div class="doth" style="left:38px;top:568px;width:5px"></div>
<svg class="ic" style="left:43px;top:565px" width="11" height="8" viewBox="0 0 11 8"><rect x="0.5" y="0.5" width="10" height="7" fill="#9cbad6" stroke="#6f88a4"/><rect x="1" y="1" width="9" height="2.5" fill="#e2ecf5"/><path d="M1.5 2 L3.5 4.5 L6.5 4.5 L9.5 1.5 M8 5.5 L9.5 7" stroke="#4a5e78" stroke-width="0.9" fill="none"/></svg>
<span class="t g r" style="left:58.30000000000001px;top:564.1px">0.124271</span>
<span class="t g r" style="left:149.60000000000002px;top:564.1px">CAN 2</span>
<span class="t g r" style="left:399.9px;top:564.1px;letter-spacing:-0.35px">CAN Error</span>
<span class="t g r" style="left:559px;top:564.1px">RxErr</span>
<span class="t g r" style="left:630.6px;top:564.1px">ECC: 100000101xxxxx, Stuff Error, Bit Position = 21</span>
<svg class="ic" style="left:18px;top:579px" width="7" height="7" viewBox="0 0 7 7"><path d="M0.5 1.5 Q0.5 0.5 1.5 0.5 H5.5 Q6.5 0.5 6.5 1.5 V3.5 Q6.5 4.5 5.5 4.5 H3.5 L2 6.5 V4.5 H1.5 Q0.5 4.5 0.5 3.5 Z" fill="#f8f8f8" stroke="#dedede" stroke-width="0.8"/></svg>
<svg class="ic" style="left:30px;top:578px" width="7" height="7" viewBox="0 0 7 7"><rect x="0.5" y="0.5" width="6" height="6" rx="0.8" fill="#f2f2f2" stroke="#a8a8a8"/><path d="M1.4 3.5 H5.6" stroke="#4a62b8" stroke-width="1"/><path d="M3.5 1.4 V5.6" stroke="#4a62b8" stroke-width="1"/></svg>
<div class="doth" style="left:38px;top:582px;width:5px"></div>
<svg class="ic" style="left:43px;top:578px" width="11" height="8" viewBox="0 0 11 8"><rect x="0.5" y="0.5" width="10" height="7" fill="#9cbad6" stroke="#6f88a4"/><rect x="1" y="1" width="9" height="2.5" fill="#e2ecf5"/><path d="M1.5 2 L3.5 4.5 L6.5 4.5 L9.5 1.5 M8 5.5 L9.5 7" stroke="#4a5e78" stroke-width="0.9" fill="none"/></svg>
<span class="t g r" style="left:58.30000000000001px;top:577.5px">0.124367</span>
<span class="t g r" style="left:149.60000000000002px;top:577.5px">CAN 2</span>
<span class="t g r" style="left:399.9px;top:577.5px;letter-spacing:-0.35px">CAN Error</span>
<span class="t g r" style="left:559px;top:577.5px">RxErr</span>
<span class="t g r" style="left:630.6px;top:577.5px">ECC: 100000101xxxxx, Stuff Error, Bit Position = 21</span>
<svg class="ic" style="left:18px;top:593px" width="7" height="7" viewBox="0 0 7 7"><path d="M0.5 1.5 Q0.5 0.5 1.5 0.5 H5.5 Q6.5 0.5 6.5 1.5 V3.5 Q6.5 4.5 5.5 4.5 H3.5 L2 6.5 V4.5 H1.5 Q0.5 4.5 0.5 3.5 Z" fill="#f8f8f8" stroke="#dedede" stroke-width="0.8"/></svg>
<svg class="ic" style="left:30px;top:591px" width="7" height="7" viewBox="0 0 7 7"><rect x="0.5" y="0.5" width="6" height="6" rx="0.8" fill="#f2f2f2" stroke="#a8a8a8"/><path d="M1.4 3.5 H5.6" stroke="#4a62b8" stroke-width="1"/><path d="M3.5 1.4 V5.6" stroke="#4a62b8" stroke-width="1"/></svg>
<div class="doth" style="left:38px;top:595px;width:5px"></div>
<svg class="ic" style="left:43px;top:592px" width="11" height="8" viewBox="0 0 11 8"><rect x="0.5" y="0.5" width="10" height="7" fill="#9cbad6" stroke="#6f88a4"/><rect x="1" y="1" width="9" height="2.5" fill="#e2ecf5"/><path d="M1.5 2 L3.5 4.5 L6.5 4.5 L9.5 1.5 M8 5.5 L9.5 7" stroke="#4a5e78" stroke-width="0.9" fill="none"/></svg>
<span class="t g r" style="left:58.30000000000001px;top:590.9px">0.124462</span>
<span class="t g r" style="left:149.60000000000002px;top:590.9px">CAN 2</span>
<span class="t g r" style="left:399.9px;top:590.9px;letter-spacing:-0.35px">CAN Error</span>
<span class="t g r" style="left:559px;top:590.9px">RxErr</span>
<span class="t g r" style="left:630.6px;top:590.9px">ECC: 100000101xxxxx, Stuff Error, Bit Position = 21</span>
<svg class="ic" style="left:18px;top:606px" width="7" height="7" viewBox="0 0 7 7"><path d="M0.5 1.5 Q0.5 0.5 1.5 0.5 H5.5 Q6.5 0.5 6.5 1.5 V3.5 Q6.5 4.5 5.5 4.5 H3.5 L2 6.5 V4.5 H1.5 Q0.5 4.5 0.5 3.5 Z" fill="#f8f8f8" stroke="#dedede" stroke-width="0.8"/></svg>
<svg class="ic" style="left:30px;top:605px" width="7" height="7" viewBox="0 0 7 7"><rect x="0.5" y="0.5" width="6" height="6" rx="0.8" fill="#f2f2f2" stroke="#a8a8a8"/><path d="M1.4 3.5 H5.6" stroke="#4a62b8" stroke-width="1"/><path d="M3.5 1.4 V5.6" stroke="#4a62b8" stroke-width="1"/></svg>
<div class="doth" style="left:38px;top:608px;width:5px"></div>
<svg class="ic" style="left:43px;top:605px" width="11" height="8" viewBox="0 0 11 8"><rect x="0.5" y="0.5" width="10" height="7" fill="#9cbad6" stroke="#6f88a4"/><rect x="1" y="1" width="9" height="2.5" fill="#e2ecf5"/><path d="M1.5 2 L3.5 4.5 L6.5 4.5 L9.5 1.5 M8 5.5 L9.5 7" stroke="#4a5e78" stroke-width="0.9" fill="none"/></svg>
<span class="t g r" style="left:58.30000000000001px;top:604.2px">0.124558</span>
<span class="t g r" style="left:149.60000000000002px;top:604.2px">CAN 2</span>
<span class="t g r" style="left:399.9px;top:604.2px;letter-spacing:-0.35px">CAN Error</span>
<span class="t g r" style="left:559px;top:604.2px">RxErr</span>
<span class="t g r" style="left:630.6px;top:604.2px">ECC: 100000101xxxxx, Stuff Error, Bit Position = 21</span>
<svg class="ic" style="left:18px;top:619px" width="7" height="7" viewBox="0 0 7 7"><path d="M0.5 1.5 Q0.5 0.5 1.5 0.5 H5.5 Q6.5 0.5 6.5 1.5 V3.5 Q6.5 4.5 5.5 4.5 H3.5 L2 6.5 V4.5 H1.5 Q0.5 4.5 0.5 3.5 Z" fill="#f8f8f8" stroke="#dedede" stroke-width="0.8"/></svg>
<svg class="ic" style="left:30px;top:618px" width="7" height="7" viewBox="0 0 7 7"><rect x="0.5" y="0.5" width="6" height="6" rx="0.8" fill="#f2f2f2" stroke="#a8a8a8"/><path d="M1.4 3.5 H5.6" stroke="#4a62b8" stroke-width="1"/><path d="M3.5 1.4 V5.6" stroke="#4a62b8" stroke-width="1"/></svg>
<div class="doth" style="left:38px;top:622px;width:5px"></div>
<svg class="ic" style="left:43px;top:618px" width="11" height="8" viewBox="0 0 11 8"><rect x="0.5" y="0.5" width="10" height="7" fill="#9cbad6" stroke="#6f88a4"/><rect x="1" y="1" width="9" height="2.5" fill="#e2ecf5"/><path d="M1.5 2 L3.5 4.5 L6.5 4.5 L9.5 1.5 M8 5.5 L9.5 7" stroke="#4a5e78" stroke-width="0.9" fill="none"/></svg>
<span class="t g r" style="left:58.30000000000001px;top:617.6px">0.124653</span>
<span class="t g r" style="left:149.60000000000002px;top:617.6px">CAN 2</span>
<span class="t g r" style="left:399.9px;top:617.6px;letter-spacing:-0.35px">CAN Error</span>
<span class="t g r" style="left:559px;top:617.6px">RxErr</span>
<span class="t g r" style="left:630.6px;top:617.6px">ECC: 100000101xxxxx, Stuff Error, Bit Position = 21</span>
<svg class="ic" style="left:18px;top:633px" width="7" height="7" viewBox="0 0 7 7"><path d="M0.5 1.5 Q0.5 0.5 1.5 0.5 H5.5 Q6.5 0.5 6.5 1.5 V3.5 Q6.5 4.5 5.5 4.5 H3.5 L2 6.5 V4.5 H1.5 Q0.5 4.5 0.5 3.5 Z" fill="#f8f8f8" stroke="#dedede" stroke-width="0.8"/></svg>
<svg class="ic" style="left:30px;top:632px" width="7" height="7" viewBox="0 0 7 7"><rect x="0.5" y="0.5" width="6" height="6" rx="0.8" fill="#f2f2f2" stroke="#a8a8a8"/><path d="M1.4 3.5 H5.6" stroke="#4a62b8" stroke-width="1"/><path d="M3.5 1.4 V5.6" stroke="#4a62b8" stroke-width="1"/></svg>
<div class="doth" style="left:38px;top:635px;width:5px"></div>
<svg class="ic" style="left:43px;top:632px" width="11" height="8" viewBox="0 0 11 8"><rect x="0.5" y="0.5" width="10" height="7" fill="#9cbad6" stroke="#6f88a4"/><rect x="1" y="1" width="9" height="2.5" fill="#e2ecf5"/><path d="M1.5 2 L3.5 4.5 L6.5 4.5 L9.5 1.5 M8 5.5 L9.5 7" stroke="#4a5e78" stroke-width="0.9" fill="none"/></svg>
<span class="t g r" style="left:58.30000000000001px;top:631.0px">0.124748</span>
<span class="t g r" style="left:149.60000000000002px;top:631.0px">CAN 2</span>
<span class="t g r" style="left:399.9px;top:631.0px;letter-spacing:-0.35px">CAN Error</span>
<span class="t g r" style="left:559px;top:631.0px">RxErr</span>
<span class="t g r" style="left:630.6px;top:631.0px">ECC: 100000101xxxxx, Stuff Error, Bit Position = 21</span>
</div>
<div style="left:12px;top:695px;width:1247px;height:17px;background:#fff"></div>
<div style="left:12px;top:696px;width:1247px;height:2px;background:#f0f0f0"></div>
<div style="left:12px;top:712px;width:1247px;height:1px;background:#a8a8a8"></div>
<span class="t" style="left:33px;top:698.5px;font-size:10.5px;color:#2a86d8">Trace</span>
<span class="t" style="left:73.4px;top:698.5px;font-size:10.5px;color:#1a1a1a">IG</span>
<span class="t" style="left:98.7px;top:698.5px;font-size:10.5px;color:#1a1a1a">Setup</span>
<span class="t" style="left:141.7px;top:698.5px;font-size:10.5px;color:#1a1a1a;letter-spacing:-0.35px">Bus Statistics</span>
<svg style="left:12px;top:696px" width="220" height="17" viewBox="0 0 220 17"><path d="M1 1 L20 15.5 M50.5 2 V15 M51 4 L61 15.5 M76.5 2 V15 M77 4 L87 15.5 M118.5 2 V15 M119 4 L129 15.5 M192.5 2 V15 M193 4 L203 15.5 M216.5 2 V15" stroke="#dedede" stroke-width="1" fill="none"/></svg>
<svg style="left:213px;top:699px" width="13" height="11" viewBox="0 0 13 11"><rect x="3" y="2.5" width="9.5" height="7" fill="#8ab0e0" stroke="#3a5aa8" stroke-width="0.9"/><rect x="4" y="9.5" width="7" height="1.2" fill="#3a5aa8"/><circle cx="3" cy="3" r="2.6" fill="#ffc020"/><circle cx="3" cy="3" r="1.3" fill="#fff3a0"/></svg>
<div style="left:12px;top:713px;width:1247px;height:23px;background:#fff"></div>
<div style="left:13px;top:717px;width:90px;height:14px;border:1px solid #a4a4a4;border-right-color:#c8c8c8;border-top-color:#c8c8c8;background:#fff"></div>
<div style="left:107px;top:714px;width:1px;height:20px;background:#6e6e6e"></div>
<div style="left:172px;top:715px;width:1px;height:19px;background:#c4c4c4"></div>
<svg style="left:152px;top:719px" width="15" height="13" viewBox="0 0 15 13"><rect x="0.5" y="0.5" width="14" height="7" fill="#d8d8d8" stroke="#b4b4b4"/><path d="M0.5 3.5 H14.5 M4 0.5 V3.5 M8 0.5 V3.5 M11.5 0.5 V3.5 M2 3.5 V7.5 M6 3.5 V7.5 M10 3.5 V7.5 M13 3.5 V7.5" stroke="#f4f4f4" stroke-width="0.8"/><text x="7.5" y="12.8" font-size="5" text-anchor="middle" fill="#bdbdbd" font-family="Liberation Sans">CAPL</text></svg>
<svg style="left:179px;top:720px" width="10" height="10" viewBox="0 0 10 10"><path d="M0.5 2 V8 Q0.5 9.5 5 9.5 Q9.5 9.5 9.5 8 V2" fill="#b8c4d4" stroke="#6a7aa0" stroke-width="0.9"/><ellipse cx="5" cy="2" rx="4.5" ry="1.6" fill="#dce4ee" stroke="#6a7aa0" stroke-width="0.9"/></svg>
<svg style="left:195px;top:717px" width="15" height="15" viewBox="0 0 15 15"><rect x="0.5" y="0.5" width="10" height="10" fill="#eaf2fb" stroke="#4a62a8"/><rect x="1" y="1" width="9.5" height="2" fill="#4a72b8"/><path d="M2 5 H9 M2 7.2 H9 M2 9.2 H9 M4.5 3 V10" stroke="#3aa0e8" stroke-width="1.1"/><path d="M13.5 3.5 L8 11 L7 14 L9.5 12 L14.5 5 Z" fill="#2a5ab0" stroke="#223a80" stroke-width="0.6"/></svg>
<div style="left:12px;top:736px;width:1247px;height:12px;background:linear-gradient(to right,#1e2b22 0%,#262c22 30%,#2c2c22 60%,#2e2e26 80%,#3c3c3a 100%)"></div>
<div style="left:12px;top:736px;width:45px;height:12px;background:#1f2d22"></div>
<div style="left:57px;top:736px;width:319px;height:12px;background:#f0f0f0;border-top:1px solid #d0d0d0"></div>
<div style="left:836px;top:736px;width:46px;height:12px;background:#55554f"></div>
<div style="left:36px;top:746.5px;width:7px;height:1.5px;background:#e8e8e8;border-radius:2px 2px 0 0"></div>
<div style="left:75px;top:746.8px;width:5px;height:1.2px;background:#222;border-radius:2px 2px 0 0"></div>
<div style="left:846px;top:746px;width:1px;height:2px;background:#ccc"></div>
<div style="left:483px;top:744px;width:15px;height:4px;background:#e8401a;clip-path:polygon(0 100%,60% 0,100% 30%,100% 100%)"></div>
<div style="left:528px;top:745px;width:17px;height:3px;background:#f5d800"></div>
<div style="left:574.5px;top:744px;width:16px;height:4px;overflow:hidden"><div style="left:0;top:0;width:16px;height:16px;border-radius:50%;background:#e04a40"></div></div>
<div style="left:619px;top:743px;width:20px;height:5px;overflow:hidden"><div style="left:0;top:0;width:20px;height:20px;border-radius:50%;background:#30b8d8"></div></div>
<div style="left:663.5px;top:745.5px;width:21px;height:2.5px;background:#f0b020"></div>
<div style="left:717px;top:744px;width:13px;height:4px;overflow:hidden"><div style="left:0;top:0;width:13px;height:13px;border-radius:50%;background:#7a7ae0"></div></div>
<div style="left:756px;top:744px;width:12px;height:4px;background:#1a7ad8;clip-path:polygon(0 100%,60% 0,100% 30%,100% 100%)"></div>
<div style="left:802.5px;top:743.5px;width:20px;height:4.5px;background:#c81818;border-radius:3px 3px 0 0"></div>
<div style="left:898px;top:744px;width:4px;height:4px;overflow:hidden"><div style="left:0;top:0;width:4px;height:4px;border-radius:50%;background:#e8f0a0"></div></div>
<div style="left:940px;top:744.5px;width:20px;height:3.5px;background:#1f8a4a;clip-path:polygon(0 100%,60% 0,100% 30%,100% 100%)"></div>
<div style="left:987px;top:745px;width:15px;height:3px;background:#e02020"></div>
<div style="left:1038.5px;top:744px;width:12px;height:4px;background:#d8d8d8;clip-path:polygon(0 100%,60% 0,100% 30%,100% 100%)"></div>
<div style="left:953px;top:745.5px;width:6px;height:2.5px;background:#f0f0f0"></div>
<div style="left:814px;top:745px;width:3px;height:3px;background:#fff"></div>
<div style="left:396px;top:746px;width:5px;height:2px;background:#8a8a8a;border-radius:2px 2px 0 0"></div>
<div style="left:445px;top:745px;width:2px;height:3px;background:#9a9a9a"></div>
<div style="left:449px;top:745px;width:2px;height:3px;background:#9a9a9a"></div>
</body></html>
